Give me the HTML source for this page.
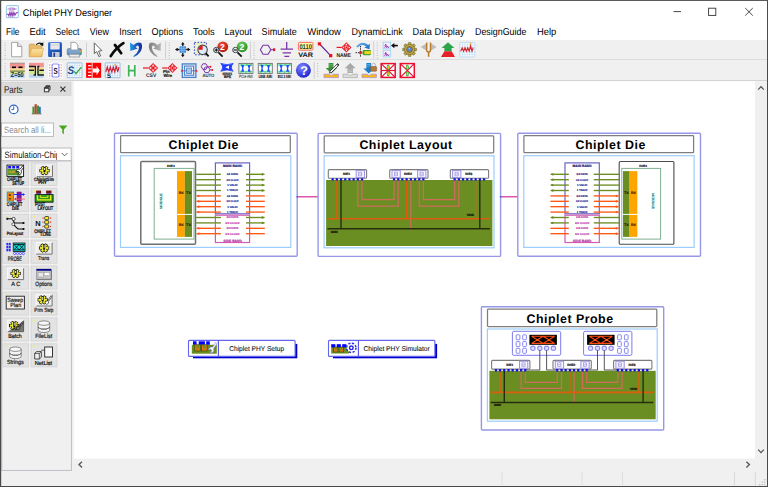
<!DOCTYPE html>
<html><head><meta charset="utf-8"><title>Chiplet PHY Designer</title>
<style>
html,body{margin:0;padding:0;background:#f0f0f0;overflow:hidden}
svg{display:block;font-family:'Liberation Sans',sans-serif;text-rendering:geometricPrecision}
</style></head><body>
<svg width="768" height="487" viewBox="0 0 768 487">
<rect x="0" y="0" width="768" height="487" fill="#f0f0f0"/>
<rect x="0" y="0" width="768" height="40" fill="#ffffff"/>
<g id="appicon">
<rect x="6.4" y="5.6" width="12" height="12" fill="#ffffff" stroke="#a6cfec" stroke-width="1.1" rx="1"/>
<path d="M7.5 9 H9.6 M10 7.5 V10.5 M11 7.5 V10.5 M12.7 7.5 V10.5 M12.9 8 L15.2 9 L12.9 10 M15.2 9 H16.6" fill="none" stroke="#a46cc8" stroke-width="0.9"/>
<path d="M6.6 14.3 H8.2 L8.9 15.9 L9.9 12.3 L10.9 15.9 L11.9 12.3 L12.9 15.9 L13.9 12.3 L14.9 15.2 L16 13.2 L17.8 12.3" fill="none" stroke="#8a3fb5" stroke-width="1.1"/>
</g>
<text x="22.8" y="15.5" font-size="9.7" fill="#000" textLength="89.4" lengthAdjust="spacingAndGlyphs">Chiplet PHY Designer</text>
<line x1="673.5" y1="11.6" x2="681" y2="11.6" stroke="#333" stroke-width="0.9" />
<rect x="708.6" y="8.2" width="7.2" height="7.2" fill="none" stroke="#333" stroke-width="0.9"/>
<path d="M745.2 8 L752.8 15.6 M752.8 8 L745.2 15.6" fill="none" stroke="#333" stroke-width="0.9"/>
<text x="6" y="35" font-size="10.0" fill="#000" textLength="13.5" lengthAdjust="spacingAndGlyphs">File</text>
<text x="29.4" y="35" font-size="10.0" fill="#000" textLength="16.2" lengthAdjust="spacingAndGlyphs">Edit</text>
<text x="55.5" y="35" font-size="10.0" fill="#000" textLength="23.9" lengthAdjust="spacingAndGlyphs">Select</text>
<text x="89.8" y="35" font-size="10.0" fill="#000" textLength="19.1" lengthAdjust="spacingAndGlyphs">View</text>
<text x="119.3" y="35" font-size="10.0" fill="#000" textLength="22.1" lengthAdjust="spacingAndGlyphs">Insert</text>
<text x="151.6" y="35" font-size="10.0" fill="#000" textLength="31.4" lengthAdjust="spacingAndGlyphs">Options</text>
<text x="193.1" y="35" font-size="10.0" fill="#000" textLength="21.6" lengthAdjust="spacingAndGlyphs">Tools</text>
<text x="224.6" y="35" font-size="10.0" fill="#000" textLength="27.1" lengthAdjust="spacingAndGlyphs">Layout</text>
<text x="261.6" y="35" font-size="10.0" fill="#000" textLength="35.2" lengthAdjust="spacingAndGlyphs">Simulate</text>
<text x="307.2" y="35" font-size="10.0" fill="#000" textLength="33.8" lengthAdjust="spacingAndGlyphs">Window</text>
<text x="351.5" y="35" font-size="10.0" fill="#000" textLength="51.2" lengthAdjust="spacingAndGlyphs">DynamicLink</text>
<text x="412.6" y="35" font-size="10.0" fill="#000" textLength="52.0" lengthAdjust="spacingAndGlyphs">Data Display</text>
<text x="475" y="35" font-size="10.0" fill="#000" textLength="51.4" lengthAdjust="spacingAndGlyphs">DesignGuide</text>
<text x="537" y="35" font-size="10.0" fill="#000" textLength="19.3" lengthAdjust="spacingAndGlyphs">Help</text>
<line x1="0" y1="59.5" x2="768" y2="59.5" stroke="#dcdcdc" stroke-width="1" />
<line x1="0" y1="80.5" x2="768" y2="80.5" stroke="#d4d4d4" stroke-width="1" />
<rect x="73.8" y="81.2" width="681.2" height="377.3" fill="#ffffff"/>
<path d="M758.2 89.6 L761 86.6 L763.8 89.6" fill="none" stroke="#555" stroke-width="1.3"/>
<path d="M758.2 449.6 L761 452.6 L763.8 449.6" fill="none" stroke="#555" stroke-width="1.3"/>
<path d="M82 461.8 L79 464.6 L82 467.4" fill="none" stroke="#555" stroke-width="1.3"/>
<path d="M746.4 461.8 L749.4 464.6 L746.4 467.4" fill="none" stroke="#555" stroke-width="1.3"/>
<line x1="502" y1="472" x2="502" y2="485.5" stroke="#dedede" stroke-width="1" />
<line x1="582" y1="472" x2="582" y2="485.5" stroke="#dedede" stroke-width="1" />
<line x1="622.5" y1="472" x2="622.5" y2="485.5" stroke="#dedede" stroke-width="1" />
<line x1="734.5" y1="472" x2="734.5" y2="485.5" stroke="#d8d8d8" stroke-width="1" />
<line x1="755.3" y1="472" x2="755.3" y2="485.5" stroke="#d8d8d8" stroke-width="1" />
<rect x="764" y="479" width="1.4" height="1.4" fill="#c4c4c4"/>
<rect x="764" y="481.5" width="1.4" height="1.4" fill="#c4c4c4"/>
<rect x="764" y="484" width="1.4" height="1.4" fill="#c4c4c4"/>
<rect x="761.5" y="481.5" width="1.4" height="1.4" fill="#c4c4c4"/>
<rect x="761.5" y="484" width="1.4" height="1.4" fill="#c4c4c4"/>
<rect x="759" y="484" width="1.4" height="1.4" fill="#c4c4c4"/>
<rect x="1.5" y="82.2" width="69.5" height="13.2" fill="#dbdbdb" stroke="#cecece" stroke-width="0.6"/>
<text x="4" y="92.6" font-size="10" fill="#1a1a1a" textLength="18.6" lengthAdjust="spacingAndGlyphs">Parts</text>
<rect x="44.4" y="87.8" width="4.4" height="4" fill="#f4f4f4" stroke="#3a3a3a" stroke-width="1"/>
<path d="M45.8 87.6 v-1.6 h4.2 v4 h-1.2" fill="none" stroke="#3a3a3a" stroke-width="1"/>
<line x1="44.4" y1="88" x2="48.8" y2="88" stroke="#2a2a2a" stroke-width="1.3" />
<line x1="45.8" y1="86.1" x2="50" y2="86.1" stroke="#2a2a2a" stroke-width="1.2" />
<path d="M60.4 86.6 L65.4 91.6 M65.4 86.6 L60.4 91.6" fill="none" stroke="#333" stroke-width="1.1"/>
<circle cx="13.7" cy="109.4" r="4.3" fill="#fff" stroke="#2b65c8" stroke-width="1.2"/>
<path d="M13.7 106.4 V109.6 H11.4" fill="none" stroke="#2b65c8" stroke-width="1"/>
<rect x="32.4" y="106.6" width="2.2" height="6.8" fill="#3a9a3a"/>
<rect x="34.6" y="104.2" width="2.2" height="9.2" fill="#d23a2a"/>
<rect x="36.8" y="105.6" width="2.2" height="7.8" fill="#2a9a4a"/>
<rect x="39" y="106.8" width="1.8" height="6.6" fill="#3a6ad0"/>
<line x1="31.8" y1="113.8" x2="41.4" y2="113.8" stroke="#6a4a2a" stroke-width="0.9" />
<rect x="1.5" y="123" width="52" height="13.4" fill="#ffffff" stroke="#b4b4b4" stroke-width="0.9"/>
<text x="4" y="133" font-size="9.2" fill="#8a8a8a" textLength="47" lengthAdjust="spacingAndGlyphs">Search all li...</text>
<path d="M58.8 125.6 H67.4 L63.9 129.6 V134.2 L62.3 133 V129.6 Z" fill="#4aa51e"/>
<rect x="1.5" y="148" width="69.7" height="12.8" fill="#ffffff" stroke="#b4b4b4" stroke-width="0.9"/>
<clipPath id="ddclip"><rect x="2" y="148" width="55" height="13"/></clipPath>
<text x="4.6" y="157.8" font-size="9.2" fill="#111" textLength="64" lengthAdjust="spacingAndGlyphs" clip-path="url(#ddclip)">Simulation-Chiplet</text>
<path d="M61.8 153 L64.6 155.8 L67.4 153" fill="none" stroke="#555" stroke-width="0.9"/>
<rect x="1.8" y="161" width="69.6" height="309.4" fill="#f0f0f0" stroke="#b9b9c4" stroke-width="0.9"/>
<rect x="0" y="0" width="768" height="1" fill="#5a5a5a"/>
<rect x="0" y="0" width="1.2" height="487" fill="#4a4a4a"/>
<rect x="767" y="0" width="1" height="487" fill="#4a4a4a"/>
<rect x="0" y="486" width="768" height="1" fill="#4a4a4a"/>
<rect x="114.5" y="133.3" width="182.7" height="123.0" fill="#ffffff" stroke="#9797e8" stroke-width="1.4" rx="1"/>
<rect x="120.6" y="135.7" width="169.7" height="17" fill="#ffffff" stroke="#7e7e7e" stroke-width="1.25" rx="0.8"/>
<text x="168.5" y="148.9" font-size="12.4" font-weight="bold" fill="#000" textLength="69.9" lengthAdjust="spacing">Chiplet Die</text>
<rect x="120.5" y="155.70000000000002" width="170.3" height="91.7" fill="none" stroke="#9ccdfc" stroke-width="1.2"/>
<rect x="140.8" y="161.5" width="54.7" height="82.8" fill="#fff" stroke="#707070" stroke-width="1.5" rx="1"/>
<rect x="154.2" y="168.4" width="39.8" height="70.7" fill="#fff" stroke="#7fb08f" stroke-width="1"/>
<rect x="177.0" y="171.10000000000002" width="7.8" height="65.8" fill="#ffa500"/>
<rect x="184.8" y="171.10000000000002" width="7.2" height="65.8" fill="#6b8e23"/>
<line x1="177.0" y1="214.4" x2="193.0" y2="214.4" stroke="#ffffff" stroke-width="1" />
<text x="167.0" y="166.70000000000002" font-size="3" fill="#222" textLength="8" lengthAdjust="spacingAndGlyphs" stroke="#222" stroke-width="0.22">DIE1</text>
<text x="178.8" y="193.9" font-size="3.3" fill="#2a1c00" textLength="4.8" lengthAdjust="spacingAndGlyphs" stroke="#2a1c00" stroke-width="0.22">RX</text>
<text x="186.1" y="193.9" font-size="3.3" fill="#0c1a06" textLength="4.8" lengthAdjust="spacingAndGlyphs" stroke="#0c1a06" stroke-width="0.22">TX</text>
<text x="178.8" y="225.70000000000002" font-size="3.3" fill="#2a1c00" textLength="4.8" lengthAdjust="spacingAndGlyphs" stroke="#2a1c00" stroke-width="0.22">RX</text>
<text x="186.1" y="225.70000000000002" font-size="3.3" fill="#0c1a06" textLength="4.8" lengthAdjust="spacingAndGlyphs" stroke="#0c1a06" stroke-width="0.22">TX</text>
<text x="0" y="0" font-size="3.2" fill="#2e8b7a" textLength="15.6" lengthAdjust="spacingAndGlyphs" stroke="#2e8b7a" stroke-width="0.22" transform="translate(161.7 208.8) rotate(-90)">MODULE</text>
<rect x="215.4" y="162.9" width="34.2" height="50.9" fill="#ffffff" stroke="#6a64c6" stroke-width="1.2"/>
<rect x="215.4" y="215.20000000000002" width="34.2" height="27.3" fill="#ffffff" stroke="#d25cb2" stroke-width="1.2"/>
<text x="222.9" y="167.20000000000002" font-size="3.4" fill="#28287a" textLength="19.2" lengthAdjust="spacingAndGlyphs" font-weight="bold" stroke="#28287a" stroke-width="0.22">MAIN BAND</text>
<text x="227.0" y="175.2" font-size="2.7" fill="#34349a" textLength="11" lengthAdjust="spacingAndGlyphs" stroke="#34349a" stroke-width="0.22">64 DATA</text>
<text x="226.5" y="180.6" font-size="2.7" fill="#34349a" textLength="12" lengthAdjust="spacingAndGlyphs" stroke="#34349a" stroke-width="0.22">2/2 CLOCK</text>
<text x="227.2" y="186.0" font-size="2.7" fill="#34349a" textLength="10.5" lengthAdjust="spacingAndGlyphs" stroke="#34349a" stroke-width="0.22">1 VALID</text>
<text x="227.1" y="191.4" font-size="2.7" fill="#34349a" textLength="10.8" lengthAdjust="spacingAndGlyphs" stroke="#34349a" stroke-width="0.22">1 TRACK</text>
<text x="227.0" y="196.8" font-size="2.7" fill="#34349a" textLength="11" lengthAdjust="spacingAndGlyphs" stroke="#34349a" stroke-width="0.22">64 DATA</text>
<text x="226.5" y="202.2" font-size="2.7" fill="#34349a" textLength="12" lengthAdjust="spacingAndGlyphs" stroke="#34349a" stroke-width="0.22">2/2 CLOCK</text>
<text x="227.2" y="207.6" font-size="2.7" fill="#34349a" textLength="10.5" lengthAdjust="spacingAndGlyphs" stroke="#34349a" stroke-width="0.22">1 VALID</text>
<text x="227.1" y="213.0" font-size="2.7" fill="#34349a" textLength="10.8" lengthAdjust="spacingAndGlyphs" stroke="#34349a" stroke-width="0.22">1 TRACK</text>
<text x="226.5" y="218.4" font-size="2.7" fill="#c846a8" textLength="12" lengthAdjust="spacingAndGlyphs" stroke="#c846a8" stroke-width="0.22">2/4 DATA</text>
<text x="225.3" y="223.8" font-size="2.7" fill="#c846a8" textLength="14.3" lengthAdjust="spacingAndGlyphs" stroke="#c846a8" stroke-width="0.22">2/2 CLOCK</text>
<text x="226.5" y="229.2" font-size="2.7" fill="#c846a8" textLength="12" lengthAdjust="spacingAndGlyphs" stroke="#c846a8" stroke-width="0.22">2/4 DATA</text>
<text x="225.3" y="234.6" font-size="2.7" fill="#c846a8" textLength="14.3" lengthAdjust="spacingAndGlyphs" stroke="#c846a8" stroke-width="0.22">2/2 CLOCK</text>
<text x="223.5" y="241.60000000000002" font-size="3.4" fill="#b838a4" textLength="18.3" lengthAdjust="spacingAndGlyphs" font-weight="bold" stroke="#b838a4" stroke-width="0.22">SIDE BAND</text>
<line x1="196.1" y1="174.3" x2="220.9" y2="174.3" stroke="#6b8e23" stroke-width="1.35" />
<line x1="246.0" y1="174.3" x2="264.40000000000003" y2="174.3" stroke="#6b8e23" stroke-width="1.35" />
<path d="M265.00000000000006 174.3 L261.8 172.9 L261.8 175.70000000000002 Z" fill="#6b8e23"/>
<line x1="196.1" y1="179.7" x2="220.9" y2="179.7" stroke="#6b8e23" stroke-width="1.35" />
<line x1="246.0" y1="179.7" x2="264.40000000000003" y2="179.7" stroke="#6b8e23" stroke-width="1.35" />
<path d="M265.00000000000006 179.7 L261.8 178.29999999999998 L261.8 181.1 Z" fill="#6b8e23"/>
<line x1="196.1" y1="185.1" x2="220.9" y2="185.1" stroke="#6b8e23" stroke-width="1.35" />
<line x1="246.0" y1="185.1" x2="264.40000000000003" y2="185.1" stroke="#6b8e23" stroke-width="1.35" />
<path d="M265.00000000000006 185.1 L261.8 183.7 L261.8 186.5 Z" fill="#6b8e23"/>
<line x1="196.1" y1="190.5" x2="220.9" y2="190.5" stroke="#6b8e23" stroke-width="1.35" />
<line x1="246.0" y1="190.5" x2="264.40000000000003" y2="190.5" stroke="#6b8e23" stroke-width="1.35" />
<path d="M265.00000000000006 190.5 L261.8 189.1 L261.8 191.9 Z" fill="#6b8e23"/>
<line x1="196.7" y1="195.9" x2="220.9" y2="195.9" stroke="#ff5a14" stroke-width="1.35" />
<path d="M196.1 195.9 L199.29999999999998 194.5 L199.29999999999998 197.3 Z" fill="#ff5a14"/>
<line x1="246.0" y1="195.9" x2="264.8" y2="195.9" stroke="#ff5a14" stroke-width="1.35" />
<line x1="196.7" y1="201.3" x2="220.9" y2="201.3" stroke="#ff5a14" stroke-width="1.35" />
<path d="M196.1 201.3 L199.29999999999998 199.9 L199.29999999999998 202.70000000000002 Z" fill="#ff5a14"/>
<line x1="246.0" y1="201.3" x2="264.8" y2="201.3" stroke="#ff5a14" stroke-width="1.35" />
<line x1="196.7" y1="206.7" x2="220.9" y2="206.7" stroke="#ff5a14" stroke-width="1.35" />
<path d="M196.1 206.7 L199.29999999999998 205.29999999999998 L199.29999999999998 208.1 Z" fill="#ff5a14"/>
<line x1="246.0" y1="206.7" x2="264.8" y2="206.7" stroke="#ff5a14" stroke-width="1.35" />
<line x1="196.7" y1="212.1" x2="220.9" y2="212.1" stroke="#ff5a14" stroke-width="1.35" />
<path d="M196.1 212.1 L199.29999999999998 210.7 L199.29999999999998 213.5 Z" fill="#ff5a14"/>
<line x1="246.0" y1="212.1" x2="264.8" y2="212.1" stroke="#ff5a14" stroke-width="1.35" />
<line x1="196.1" y1="217.5" x2="220.9" y2="217.5" stroke="#6b8e23" stroke-width="1.35" />
<line x1="246.0" y1="217.5" x2="264.40000000000003" y2="217.5" stroke="#6b8e23" stroke-width="1.35" />
<path d="M265.00000000000006 217.5 L261.8 216.1 L261.8 218.9 Z" fill="#6b8e23"/>
<line x1="196.1" y1="222.9" x2="220.9" y2="222.9" stroke="#6b8e23" stroke-width="1.35" />
<line x1="246.0" y1="222.9" x2="264.40000000000003" y2="222.9" stroke="#6b8e23" stroke-width="1.35" />
<path d="M265.00000000000006 222.9 L261.8 221.5 L261.8 224.3 Z" fill="#6b8e23"/>
<line x1="196.7" y1="228.3" x2="220.9" y2="228.3" stroke="#ff5a14" stroke-width="1.35" />
<path d="M196.1 228.3 L199.29999999999998 226.9 L199.29999999999998 229.70000000000002 Z" fill="#ff5a14"/>
<line x1="246.0" y1="228.3" x2="264.8" y2="228.3" stroke="#ff5a14" stroke-width="1.35" />
<line x1="196.7" y1="233.7" x2="220.9" y2="233.7" stroke="#ff5a14" stroke-width="1.35" />
<path d="M196.1 233.7 L199.29999999999998 232.29999999999998 L199.29999999999998 235.1 Z" fill="#ff5a14"/>
<line x1="246.0" y1="233.7" x2="264.8" y2="233.7" stroke="#ff5a14" stroke-width="1.35" />
<rect x="318.1" y="133.4" width="182.5" height="123.0" fill="#ffffff" stroke="#9797e8" stroke-width="1.4" rx="1"/>
<rect x="324.20000000000005" y="135.8" width="169.5" height="17" fill="#ffffff" stroke="#7e7e7e" stroke-width="1.25" rx="0.8"/>
<text x="359.4" y="148.9" font-size="12.4" font-weight="bold" fill="#000" textLength="92.8" lengthAdjust="spacing">Chiplet Layout</text>
<rect x="324.1" y="155.8" width="169.9" height="92" fill="none" stroke="#9ccdfc" stroke-width="1.2"/>
<rect x="326.1" y="180.0" width="166.3" height="66" fill="#6b8e23"/>
<path d="M362.0 180.0 V199.7 H394.0 V180.0" fill="none" stroke="#cf6c5c" stroke-width="1.2"/>
<path d="M357.8 180.0 V206.2 H398.2 V180.0" fill="none" stroke="#cf6c5c" stroke-width="1.2"/>
<path d="M423.4 180.0 V199.7 H454.6 V180.0" fill="none" stroke="#cf6c5c" stroke-width="1.2"/>
<path d="M419.2 180.0 V206.2 H458.8 V180.0" fill="none" stroke="#cf6c5c" stroke-width="1.2"/>
<line x1="410.8" y1="180.0" x2="410.8" y2="229.4" stroke="#cf6c5c" stroke-width="1.2" />
<line x1="327.40000000000003" y1="218.8" x2="490.0" y2="218.8" stroke="#dc5d0e" stroke-width="1.6" />
<line x1="336.8" y1="180.0" x2="336.8" y2="218.8" stroke="#dc5d0e" stroke-width="1.3" />
<line x1="406.6" y1="180.0" x2="406.6" y2="218.8" stroke="#dc5d0e" stroke-width="1.3" />
<line x1="475.6" y1="180.0" x2="475.6" y2="218.8" stroke="#dc5d0e" stroke-width="1.3" />
<line x1="327.40000000000003" y1="228.8" x2="490.0" y2="228.8" stroke="#272e10" stroke-width="1.6" />
<line x1="341.0" y1="180.0" x2="341.0" y2="228.8" stroke="#272e10" stroke-width="1.4" />
<line x1="479.8" y1="180.0" x2="479.8" y2="228.8" stroke="#272e10" stroke-width="1.4" />
<text x="330.8" y="232.7" font-size="3" fill="#0c0c06" textLength="7" lengthAdjust="spacingAndGlyphs" font-weight="bold" stroke="#0c0c06" stroke-width="0.22">GND</text>
<text x="466.8" y="216.2" font-size="3" fill="#0c0c06" textLength="7" lengthAdjust="spacingAndGlyphs" font-weight="bold" stroke="#0c0c06" stroke-width="0.22">VDD</text>
<rect x="328.3" y="169.60000000000002" width="38.3" height="8.7" fill="#ffffff" stroke="#7c7c7c" stroke-width="1.1" rx="1"/>
<rect x="356.2" y="170.40000000000003" width="8.3" height="7.1" fill="#f6f4ff" stroke="#9a92e2" stroke-width="1"/>
<rect x="358.59999999999997" y="172.10000000000002" width="3.2" height="3.8" fill="none" stroke="#8c84dc" stroke-width="0.6"/>
<line x1="358.59999999999997" y1="174.00000000000003" x2="361.8" y2="174.00000000000003" stroke="#8c84dc" stroke-width="0.6" />
<text x="342.9" y="175.3" font-size="3.2" fill="#222" textLength="7" lengthAdjust="spacingAndGlyphs" font-weight="bold" stroke="#222" stroke-width="0.22">DIE1</text>
<rect x="331.5" y="178.3" width="2.3" height="2.3" fill="#1212e0" rx="0.5"/>
<rect x="335.7" y="178.3" width="2.3" height="2.3" fill="#1212e0" rx="0.5"/>
<rect x="339.9" y="178.3" width="2.3" height="2.3" fill="#1212e0" rx="0.5"/>
<rect x="344.1" y="178.3" width="2.3" height="2.3" fill="#1212e0" rx="0.5"/>
<rect x="348.3" y="178.3" width="2.3" height="2.3" fill="#1212e0" rx="0.5"/>
<rect x="352.5" y="178.3" width="2.3" height="2.3" fill="#1212e0" rx="0.5"/>
<rect x="356.7" y="178.3" width="2.3" height="2.3" fill="#1212e0" rx="0.5"/>
<rect x="360.9" y="178.3" width="2.3" height="2.3" fill="#1212e0" rx="0.5"/>
<rect x="389.7" y="169.60000000000002" width="38.3" height="8.7" fill="#ffffff" stroke="#7c7c7c" stroke-width="1.1" rx="1"/>
<rect x="392.0" y="170.40000000000003" width="8.3" height="7.1" fill="#f6f4ff" stroke="#9a92e2" stroke-width="1"/>
<rect x="394.4" y="172.10000000000002" width="3.2" height="3.8" fill="none" stroke="#8c84dc" stroke-width="0.6"/>
<line x1="394.4" y1="174.00000000000003" x2="397.6" y2="174.00000000000003" stroke="#8c84dc" stroke-width="0.6" />
<rect x="417.59999999999997" y="170.40000000000003" width="8.3" height="7.1" fill="#f6f4ff" stroke="#9a92e2" stroke-width="1"/>
<rect x="419.99999999999994" y="172.10000000000002" width="3.2" height="3.8" fill="none" stroke="#8c84dc" stroke-width="0.6"/>
<line x1="419.99999999999994" y1="174.00000000000003" x2="423.2" y2="174.00000000000003" stroke="#8c84dc" stroke-width="0.6" />
<text x="404.0" y="175.3" font-size="3.2" fill="#222" textLength="8" lengthAdjust="spacingAndGlyphs" font-weight="bold" stroke="#222" stroke-width="0.22">DIE2</text>
<rect x="392.9" y="178.3" width="2.3" height="2.3" fill="#1212e0" rx="0.5"/>
<rect x="397.1" y="178.3" width="2.3" height="2.3" fill="#1212e0" rx="0.5"/>
<rect x="401.2" y="178.3" width="2.3" height="2.3" fill="#1212e0" rx="0.5"/>
<rect x="405.5" y="178.3" width="2.3" height="2.3" fill="#1212e0" rx="0.5"/>
<rect x="409.7" y="178.3" width="2.3" height="2.3" fill="#1212e0" rx="0.5"/>
<rect x="413.9" y="178.3" width="2.3" height="2.3" fill="#1212e0" rx="0.5"/>
<rect x="418.1" y="178.3" width="2.3" height="2.3" fill="#1212e0" rx="0.5"/>
<rect x="422.2" y="178.3" width="2.3" height="2.3" fill="#1212e0" rx="0.5"/>
<rect x="450.3" y="169.60000000000002" width="38.3" height="8.7" fill="#ffffff" stroke="#7c7c7c" stroke-width="1.1" rx="1"/>
<rect x="452.6" y="170.40000000000003" width="8.3" height="7.1" fill="#f6f4ff" stroke="#9a92e2" stroke-width="1"/>
<rect x="455.0" y="172.10000000000002" width="3.2" height="3.8" fill="none" stroke="#8c84dc" stroke-width="0.6"/>
<line x1="455.0" y1="174.00000000000003" x2="458.20000000000005" y2="174.00000000000003" stroke="#8c84dc" stroke-width="0.6" />
<text x="465.3" y="175.3" font-size="3.2" fill="#222" textLength="7" lengthAdjust="spacingAndGlyphs" font-weight="bold" stroke="#222" stroke-width="0.22">DIE3</text>
<rect x="453.5" y="178.3" width="2.3" height="2.3" fill="#1212e0" rx="0.5"/>
<rect x="457.7" y="178.3" width="2.3" height="2.3" fill="#1212e0" rx="0.5"/>
<rect x="461.9" y="178.3" width="2.3" height="2.3" fill="#1212e0" rx="0.5"/>
<rect x="466.1" y="178.3" width="2.3" height="2.3" fill="#1212e0" rx="0.5"/>
<rect x="470.3" y="178.3" width="2.3" height="2.3" fill="#1212e0" rx="0.5"/>
<rect x="474.5" y="178.3" width="2.3" height="2.3" fill="#1212e0" rx="0.5"/>
<rect x="478.7" y="178.3" width="2.3" height="2.3" fill="#1212e0" rx="0.5"/>
<rect x="482.9" y="178.3" width="2.3" height="2.3" fill="#1212e0" rx="0.5"/>
<rect x="517.8" y="133.3" width="182.7" height="123.0" fill="#ffffff" stroke="#9797e8" stroke-width="1.4" rx="1"/>
<rect x="523.9" y="135.7" width="169.7" height="17" fill="#ffffff" stroke="#7e7e7e" stroke-width="1.25" rx="0.8"/>
<text x="575.5" y="148.9" font-size="12.4" font-weight="bold" fill="#000" textLength="69.8" lengthAdjust="spacing">Chiplet Die</text>
<rect x="523.8" y="155.70000000000002" width="170.3" height="91.7" fill="none" stroke="#9ccdfc" stroke-width="1.2"/>
<rect x="619.1999999999999" y="161.5" width="54.7" height="82.8" fill="#fff" stroke="#4c4c4c" stroke-width="1.1" rx="1"/>
<rect x="621.8" y="168.4" width="38.8" height="70.7" fill="#fff" stroke="#7fb08f" stroke-width="1"/>
<rect x="623.0" y="171.10000000000002" width="6.6" height="65.8" fill="#6b8e23"/>
<rect x="629.5999999999999" y="171.10000000000002" width="7.7" height="65.8" fill="#ffa500"/>
<line x1="622.3" y1="214.4" x2="638.3" y2="214.4" stroke="#ffffff" stroke-width="1" />
<text x="639.3" y="166.70000000000002" font-size="3" fill="#222" textLength="8" lengthAdjust="spacingAndGlyphs" stroke="#222" stroke-width="0.22">DIE1</text>
<text x="624.0" y="193.9" font-size="3.3" fill="#0c1a06" textLength="4.8" lengthAdjust="spacingAndGlyphs" stroke="#0c1a06" stroke-width="0.22">TX</text>
<text x="631.0" y="193.9" font-size="3.3" fill="#2a1c00" textLength="4.8" lengthAdjust="spacingAndGlyphs" stroke="#2a1c00" stroke-width="0.22">RX</text>
<text x="624.0" y="225.70000000000002" font-size="3.3" fill="#0c1a06" textLength="4.8" lengthAdjust="spacingAndGlyphs" stroke="#0c1a06" stroke-width="0.22">TX</text>
<text x="631.0" y="225.70000000000002" font-size="3.3" fill="#2a1c00" textLength="4.8" lengthAdjust="spacingAndGlyphs" stroke="#2a1c00" stroke-width="0.22">RX</text>
<text x="0" y="0" font-size="3.2" fill="#2e8b7a" textLength="15.6" lengthAdjust="spacingAndGlyphs" stroke="#2e8b7a" stroke-width="0.22" transform="translate(651.8 193.3) rotate(90)">MODULE</text>
<rect x="565.0" y="162.9" width="34.3" height="50.9" fill="#ffffff" stroke="#6a64c6" stroke-width="1.2"/>
<rect x="565.0" y="215.20000000000002" width="34.3" height="27.3" fill="#ffffff" stroke="#d25cb2" stroke-width="1.2"/>
<text x="572.5" y="167.20000000000002" font-size="3.4" fill="#28287a" textLength="19.2" lengthAdjust="spacingAndGlyphs" font-weight="bold" stroke="#28287a" stroke-width="0.22">MAIN BAND</text>
<text x="576.6" y="175.2" font-size="2.7" fill="#34349a" textLength="11" lengthAdjust="spacingAndGlyphs" stroke="#34349a" stroke-width="0.22">64 DATA</text>
<text x="576.1" y="180.6" font-size="2.7" fill="#34349a" textLength="12" lengthAdjust="spacingAndGlyphs" stroke="#34349a" stroke-width="0.22">2/2 CLOCK</text>
<text x="576.9" y="186.0" font-size="2.7" fill="#34349a" textLength="10.5" lengthAdjust="spacingAndGlyphs" stroke="#34349a" stroke-width="0.22">1 VALID</text>
<text x="576.8" y="191.4" font-size="2.7" fill="#34349a" textLength="10.8" lengthAdjust="spacingAndGlyphs" stroke="#34349a" stroke-width="0.22">1 TRACK</text>
<text x="576.6" y="196.8" font-size="2.7" fill="#34349a" textLength="11" lengthAdjust="spacingAndGlyphs" stroke="#34349a" stroke-width="0.22">64 DATA</text>
<text x="576.1" y="202.2" font-size="2.7" fill="#34349a" textLength="12" lengthAdjust="spacingAndGlyphs" stroke="#34349a" stroke-width="0.22">2/2 CLOCK</text>
<text x="576.9" y="207.6" font-size="2.7" fill="#34349a" textLength="10.5" lengthAdjust="spacingAndGlyphs" stroke="#34349a" stroke-width="0.22">1 VALID</text>
<text x="576.8" y="213.0" font-size="2.7" fill="#34349a" textLength="10.8" lengthAdjust="spacingAndGlyphs" stroke="#34349a" stroke-width="0.22">1 TRACK</text>
<text x="576.1" y="218.4" font-size="2.7" fill="#c846a8" textLength="12" lengthAdjust="spacingAndGlyphs" stroke="#c846a8" stroke-width="0.22">2/4 DATA</text>
<text x="575.0" y="223.8" font-size="2.7" fill="#c846a8" textLength="14.3" lengthAdjust="spacingAndGlyphs" stroke="#c846a8" stroke-width="0.22">2/2 CLOCK</text>
<text x="576.1" y="229.2" font-size="2.7" fill="#c846a8" textLength="12" lengthAdjust="spacingAndGlyphs" stroke="#c846a8" stroke-width="0.22">2/4 DATA</text>
<text x="575.0" y="234.6" font-size="2.7" fill="#c846a8" textLength="14.3" lengthAdjust="spacingAndGlyphs" stroke="#c846a8" stroke-width="0.22">2/2 CLOCK</text>
<text x="573.1" y="241.60000000000002" font-size="3.4" fill="#b838a4" textLength="18.3" lengthAdjust="spacingAndGlyphs" font-weight="bold" stroke="#b838a4" stroke-width="0.22">SIDE BAND</text>
<line x1="550.8" y1="174.3" x2="568.8" y2="174.3" stroke="#6b8e23" stroke-width="1.35" />
<path d="M550.1999999999999 174.3 L553.4 172.9 L553.4 175.70000000000002 Z" fill="#6b8e23"/>
<line x1="593.8" y1="174.3" x2="619.0" y2="174.3" stroke="#6b8e23" stroke-width="1.35" />
<line x1="550.8" y1="179.7" x2="568.8" y2="179.7" stroke="#6b8e23" stroke-width="1.35" />
<path d="M550.1999999999999 179.7 L553.4 178.29999999999998 L553.4 181.1 Z" fill="#6b8e23"/>
<line x1="593.8" y1="179.7" x2="619.0" y2="179.7" stroke="#6b8e23" stroke-width="1.35" />
<line x1="550.8" y1="185.1" x2="568.8" y2="185.1" stroke="#6b8e23" stroke-width="1.35" />
<path d="M550.1999999999999 185.1 L553.4 183.7 L553.4 186.5 Z" fill="#6b8e23"/>
<line x1="593.8" y1="185.1" x2="619.0" y2="185.1" stroke="#6b8e23" stroke-width="1.35" />
<line x1="550.8" y1="190.5" x2="568.8" y2="190.5" stroke="#6b8e23" stroke-width="1.35" />
<path d="M550.1999999999999 190.5 L553.4 189.1 L553.4 191.9 Z" fill="#6b8e23"/>
<line x1="593.8" y1="190.5" x2="619.0" y2="190.5" stroke="#6b8e23" stroke-width="1.35" />
<line x1="550.4" y1="195.9" x2="568.8" y2="195.9" stroke="#ff5a14" stroke-width="1.35" />
<line x1="593.8" y1="195.9" x2="618.4" y2="195.9" stroke="#ff5a14" stroke-width="1.35" />
<path d="M619.0 195.9 L615.8 194.5 L615.8 197.3 Z" fill="#ff5a14"/>
<line x1="550.4" y1="201.3" x2="568.8" y2="201.3" stroke="#ff5a14" stroke-width="1.35" />
<line x1="593.8" y1="201.3" x2="618.4" y2="201.3" stroke="#ff5a14" stroke-width="1.35" />
<path d="M619.0 201.3 L615.8 199.9 L615.8 202.70000000000002 Z" fill="#ff5a14"/>
<line x1="550.4" y1="206.7" x2="568.8" y2="206.7" stroke="#ff5a14" stroke-width="1.35" />
<line x1="593.8" y1="206.7" x2="618.4" y2="206.7" stroke="#ff5a14" stroke-width="1.35" />
<path d="M619.0 206.7 L615.8 205.29999999999998 L615.8 208.1 Z" fill="#ff5a14"/>
<line x1="550.4" y1="212.1" x2="568.8" y2="212.1" stroke="#ff5a14" stroke-width="1.35" />
<line x1="593.8" y1="212.1" x2="618.4" y2="212.1" stroke="#ff5a14" stroke-width="1.35" />
<path d="M619.0 212.1 L615.8 210.7 L615.8 213.5 Z" fill="#ff5a14"/>
<line x1="550.8" y1="217.5" x2="568.8" y2="217.5" stroke="#6b8e23" stroke-width="1.35" />
<path d="M550.1999999999999 217.5 L553.4 216.1 L553.4 218.9 Z" fill="#6b8e23"/>
<line x1="593.8" y1="217.5" x2="619.0" y2="217.5" stroke="#6b8e23" stroke-width="1.35" />
<line x1="550.8" y1="222.9" x2="568.8" y2="222.9" stroke="#6b8e23" stroke-width="1.35" />
<path d="M550.1999999999999 222.9 L553.4 221.5 L553.4 224.3 Z" fill="#6b8e23"/>
<line x1="593.8" y1="222.9" x2="619.0" y2="222.9" stroke="#6b8e23" stroke-width="1.35" />
<line x1="550.4" y1="228.3" x2="568.8" y2="228.3" stroke="#ff5a14" stroke-width="1.35" />
<line x1="593.8" y1="228.3" x2="618.4" y2="228.3" stroke="#ff5a14" stroke-width="1.35" />
<path d="M619.0 228.3 L615.8 226.9 L615.8 229.70000000000002 Z" fill="#ff5a14"/>
<line x1="550.4" y1="233.7" x2="568.8" y2="233.7" stroke="#ff5a14" stroke-width="1.35" />
<line x1="593.8" y1="233.7" x2="618.4" y2="233.7" stroke="#ff5a14" stroke-width="1.35" />
<path d="M619.0 233.7 L615.8 232.29999999999998 L615.8 235.1 Z" fill="#ff5a14"/>
<rect x="481.4" y="306.8" width="182.3" height="123.2" fill="#ffffff" stroke="#9797e8" stroke-width="1.4" rx="1"/>
<rect x="487.5" y="309.2" width="169.3" height="17.4" fill="#ffffff" stroke="#7e7e7e" stroke-width="1.25" rx="0.8"/>
<text x="526.5" y="322.9" font-size="12.4" font-weight="bold" fill="#000" textLength="86.6" lengthAdjust="spacing">Chiplet Probe</text>
<rect x="487.4" y="329.0" width="169.8" height="92.2" fill="none" stroke="#9ccdfc" stroke-width="1.2"/>
<rect x="489.4" y="370.8" width="166.3" height="48.5" fill="#6b8e23"/>
<path d="M525.3 370.8 V382.4 H557.3 V370.8" fill="none" stroke="#cf6c5c" stroke-width="1.2"/>
<path d="M521.1 370.8 V388.4 H561.5 V370.8" fill="none" stroke="#cf6c5c" stroke-width="1.2"/>
<path d="M586.7 370.8 V382.4 H617.9 V370.8" fill="none" stroke="#cf6c5c" stroke-width="1.2"/>
<path d="M582.5 370.8 V388.4 H622.1 V370.8" fill="none" stroke="#cf6c5c" stroke-width="1.2"/>
<line x1="574.1" y1="370.8" x2="574.1" y2="403.1" stroke="#cf6c5c" stroke-width="1.2" />
<line x1="490.7" y1="392.4" x2="653.3" y2="392.4" stroke="#dc5d0e" stroke-width="1.6" />
<line x1="500.1" y1="370.8" x2="500.1" y2="392.4" stroke="#dc5d0e" stroke-width="1.3" />
<line x1="569.9" y1="370.8" x2="569.9" y2="392.4" stroke="#dc5d0e" stroke-width="1.3" />
<line x1="638.9" y1="370.8" x2="638.9" y2="392.4" stroke="#dc5d0e" stroke-width="1.3" />
<line x1="490.7" y1="402.5" x2="653.3" y2="402.5" stroke="#272e10" stroke-width="1.6" />
<line x1="504.3" y1="370.8" x2="504.3" y2="402.5" stroke="#272e10" stroke-width="1.4" />
<line x1="643.1" y1="370.8" x2="643.1" y2="402.5" stroke="#272e10" stroke-width="1.4" />
<text x="494.1" y="406.4" font-size="3" fill="#0c0c06" textLength="7" lengthAdjust="spacingAndGlyphs" font-weight="bold" stroke="#0c0c06" stroke-width="0.22">GND</text>
<text x="630.1" y="389.8" font-size="3" fill="#0c0c06" textLength="7" lengthAdjust="spacingAndGlyphs" font-weight="bold" stroke="#0c0c06" stroke-width="0.22">VDD</text>
<rect x="512.4" y="331.3" width="48.3" height="24" fill="#ffffff" stroke="#7b7bf0" stroke-width="1" rx="1.5"/>
<rect x="529.4" y="334.8" width="27.5" height="10" fill="#000000"/>
<path d="M531.6 336.2 H554.6999999999999 M531.6 343.40000000000003 H554.6999999999999 M531.6 336.2 L543.15 343.40000000000003 L554.6999999999999 336.2 M531.6 343.40000000000003 L543.15 336.2 L554.6999999999999 343.40000000000003" fill="none" stroke="#ff4a10" stroke-width="1.1"/>
<circle cx="532.9" cy="348.3" r="2.2" fill="#dedeff" stroke="#8c8cf2" stroke-width="1.1"/>
<circle cx="539.8" cy="348.3" r="2.2" fill="#dedeff" stroke="#8c8cf2" stroke-width="1.1"/>
<circle cx="546.6" cy="348.3" r="2.2" fill="#dedeff" stroke="#8c8cf2" stroke-width="1.1"/>
<circle cx="553.4" cy="348.3" r="2.2" fill="#dedeff" stroke="#8c8cf2" stroke-width="1.1"/>
<rect x="516.2" y="334.8" width="3.7" height="5" fill="#ffffff" stroke="#7b7bf0" stroke-width="0.9" rx="0.8"/>
<rect x="516.2" y="341.6" width="3.7" height="5" fill="#ffffff" stroke="#7b7bf0" stroke-width="0.9" rx="0.8"/>
<rect x="516.2" y="348.3" width="3.7" height="5" fill="#ffffff" stroke="#7b7bf0" stroke-width="0.9" rx="0.8"/>
<rect x="522.7" y="334.8" width="3.7" height="5" fill="#ffffff" stroke="#7b7bf0" stroke-width="0.9" rx="0.8"/>
<rect x="522.7" y="341.6" width="3.7" height="5" fill="#ffffff" stroke="#7b7bf0" stroke-width="0.9" rx="0.8"/>
<rect x="522.7" y="348.3" width="3.7" height="5" fill="#ffffff" stroke="#7b7bf0" stroke-width="0.9" rx="0.8"/>
<rect x="583.6" y="331.3" width="48.3" height="24" fill="#ffffff" stroke="#7b7bf0" stroke-width="1" rx="1.5"/>
<rect x="587.1" y="334.8" width="27.5" height="10" fill="#000000"/>
<path d="M589.3000000000001 336.2 H612.4 M589.3000000000001 343.40000000000003 H612.4 M589.3000000000001 336.2 L600.85 343.40000000000003 L612.4 336.2 M589.3000000000001 343.40000000000003 L600.85 336.2 L612.4 343.40000000000003" fill="none" stroke="#ff4a10" stroke-width="1.1"/>
<circle cx="590.6" cy="348.3" r="2.2" fill="#dedeff" stroke="#8c8cf2" stroke-width="1.1"/>
<circle cx="597.5" cy="348.3" r="2.2" fill="#dedeff" stroke="#8c8cf2" stroke-width="1.1"/>
<circle cx="604.3" cy="348.3" r="2.2" fill="#dedeff" stroke="#8c8cf2" stroke-width="1.1"/>
<circle cx="611.1" cy="348.3" r="2.2" fill="#dedeff" stroke="#8c8cf2" stroke-width="1.1"/>
<rect x="617.6" y="334.8" width="3.7" height="5" fill="#ffffff" stroke="#7b7bf0" stroke-width="0.9" rx="0.8"/>
<rect x="617.6" y="341.6" width="3.7" height="5" fill="#ffffff" stroke="#7b7bf0" stroke-width="0.9" rx="0.8"/>
<rect x="617.6" y="348.3" width="3.7" height="5" fill="#ffffff" stroke="#7b7bf0" stroke-width="0.9" rx="0.8"/>
<rect x="624.4" y="334.8" width="3.7" height="5" fill="#ffffff" stroke="#7b7bf0" stroke-width="0.9" rx="0.8"/>
<rect x="624.4" y="341.6" width="3.7" height="5" fill="#ffffff" stroke="#7b7bf0" stroke-width="0.9" rx="0.8"/>
<rect x="624.4" y="348.3" width="3.7" height="5" fill="#ffffff" stroke="#7b7bf0" stroke-width="0.9" rx="0.8"/>
<path d="M539.8 350.3 V370.0 H525.3" fill="none" stroke="#444" stroke-width="0.9"/>
<path d="M546.6 350.3 V370.0 H557.3" fill="none" stroke="#444" stroke-width="0.9"/>
<path d="M597.5 350.3 V370.0 H586.7" fill="none" stroke="#444" stroke-width="0.9"/>
<path d="M604.3 350.3 V370.0 H617.9" fill="none" stroke="#444" stroke-width="0.9"/>
<rect x="491.59999999999997" y="360.40000000000003" width="38.3" height="8.7" fill="#ffffff" stroke="#7c7c7c" stroke-width="1.1" rx="1"/>
<rect x="519.5" y="361.20000000000005" width="8.3" height="7.1" fill="#f6f4ff" stroke="#9a92e2" stroke-width="1"/>
<rect x="521.9" y="362.90000000000003" width="3.2" height="3.8" fill="none" stroke="#8c84dc" stroke-width="0.6"/>
<line x1="521.9" y1="364.8" x2="525.1" y2="364.8" stroke="#8c84dc" stroke-width="0.6" />
<text x="506.2" y="366.1" font-size="3.2" fill="#222" textLength="7" lengthAdjust="spacingAndGlyphs" font-weight="bold" stroke="#222" stroke-width="0.22">DIE1</text>
<rect x="494.8" y="369.1" width="2.3" height="2.3" fill="#1212e0" rx="0.5"/>
<rect x="498.9" y="369.1" width="2.3" height="2.3" fill="#1212e0" rx="0.5"/>
<rect x="503.1" y="369.1" width="2.3" height="2.3" fill="#1212e0" rx="0.5"/>
<rect x="507.4" y="369.1" width="2.3" height="2.3" fill="#1212e0" rx="0.5"/>
<rect x="511.5" y="369.1" width="2.3" height="2.3" fill="#1212e0" rx="0.5"/>
<rect x="515.8" y="369.1" width="2.3" height="2.3" fill="#1212e0" rx="0.5"/>
<rect x="520.0" y="369.1" width="2.3" height="2.3" fill="#1212e0" rx="0.5"/>
<rect x="524.1" y="369.1" width="2.3" height="2.3" fill="#1212e0" rx="0.5"/>
<rect x="553.0" y="360.40000000000003" width="38.3" height="8.7" fill="#ffffff" stroke="#7c7c7c" stroke-width="1.1" rx="1"/>
<rect x="555.3" y="361.20000000000005" width="8.3" height="7.1" fill="#f6f4ff" stroke="#9a92e2" stroke-width="1"/>
<rect x="557.6999999999999" y="362.90000000000003" width="3.2" height="3.8" fill="none" stroke="#8c84dc" stroke-width="0.6"/>
<line x1="557.6999999999999" y1="364.8" x2="560.9" y2="364.8" stroke="#8c84dc" stroke-width="0.6" />
<rect x="580.9" y="361.20000000000005" width="8.3" height="7.1" fill="#f6f4ff" stroke="#9a92e2" stroke-width="1"/>
<rect x="583.3" y="362.90000000000003" width="3.2" height="3.8" fill="none" stroke="#8c84dc" stroke-width="0.6"/>
<line x1="583.3" y1="364.8" x2="586.5" y2="364.8" stroke="#8c84dc" stroke-width="0.6" />
<text x="567.3" y="366.1" font-size="3.2" fill="#222" textLength="8" lengthAdjust="spacingAndGlyphs" font-weight="bold" stroke="#222" stroke-width="0.22">DIE2</text>
<rect x="556.1" y="369.1" width="2.3" height="2.3" fill="#1212e0" rx="0.5"/>
<rect x="560.4" y="369.1" width="2.3" height="2.3" fill="#1212e0" rx="0.5"/>
<rect x="564.5" y="369.1" width="2.3" height="2.3" fill="#1212e0" rx="0.5"/>
<rect x="568.8" y="369.1" width="2.3" height="2.3" fill="#1212e0" rx="0.5"/>
<rect x="572.9" y="369.1" width="2.3" height="2.3" fill="#1212e0" rx="0.5"/>
<rect x="577.1" y="369.1" width="2.3" height="2.3" fill="#1212e0" rx="0.5"/>
<rect x="581.4" y="369.1" width="2.3" height="2.3" fill="#1212e0" rx="0.5"/>
<rect x="585.5" y="369.1" width="2.3" height="2.3" fill="#1212e0" rx="0.5"/>
<rect x="613.5999999999999" y="360.40000000000003" width="38.3" height="8.7" fill="#ffffff" stroke="#7c7c7c" stroke-width="1.1" rx="1"/>
<rect x="615.8999999999999" y="361.20000000000005" width="8.3" height="7.1" fill="#f6f4ff" stroke="#9a92e2" stroke-width="1"/>
<rect x="618.2999999999998" y="362.90000000000003" width="3.2" height="3.8" fill="none" stroke="#8c84dc" stroke-width="0.6"/>
<line x1="618.2999999999998" y1="364.8" x2="621.4999999999999" y2="364.8" stroke="#8c84dc" stroke-width="0.6" />
<text x="628.6" y="366.1" font-size="3.2" fill="#222" textLength="7" lengthAdjust="spacingAndGlyphs" font-weight="bold" stroke="#222" stroke-width="0.22">DIE3</text>
<rect x="616.7" y="369.1" width="2.3" height="2.3" fill="#1212e0" rx="0.5"/>
<rect x="620.9" y="369.1" width="2.3" height="2.3" fill="#1212e0" rx="0.5"/>
<rect x="625.1" y="369.1" width="2.3" height="2.3" fill="#1212e0" rx="0.5"/>
<rect x="629.3" y="369.1" width="2.3" height="2.3" fill="#1212e0" rx="0.5"/>
<rect x="633.5" y="369.1" width="2.3" height="2.3" fill="#1212e0" rx="0.5"/>
<rect x="637.7" y="369.1" width="2.3" height="2.3" fill="#1212e0" rx="0.5"/>
<rect x="641.9" y="369.1" width="2.3" height="2.3" fill="#1212e0" rx="0.5"/>
<rect x="646.1" y="369.1" width="2.3" height="2.3" fill="#1212e0" rx="0.5"/>
<line x1="297.6" y1="196.8" x2="317.6" y2="196.8" stroke="#d42d96" stroke-width="1.2" />
<rect x="296.4" y="196" width="1.6" height="1.6" fill="#4a6ae8"/>
<line x1="501" y1="196.8" x2="517.2" y2="196.8" stroke="#d42d96" stroke-width="1.2" />
<rect x="499.8" y="196" width="1.6" height="1.6" fill="#4a6ae8"/>
<rect x="193.0" y="343.9" width="104.3" height="14.4" fill="#0000cc"/>
<rect x="188.5" y="340.4" width="106.6" height="16" fill="#ffffff" stroke="#6464ee" stroke-width="1.1" rx="1"/>
<line x1="218.4" y1="340.4" x2="218.4" y2="356.4" stroke="#5050e8" stroke-width="1.1" />
<rect x="191.8" y="344.79999999999995" width="25" height="8.9" fill="#6b8e23"/>
<rect x="193.0" y="341.29999999999995" width="3.6" height="3.5" fill="#0000ff"/>
<rect x="198.7" y="341.29999999999995" width="6.2" height="3.5" fill="#0000ff"/>
<rect x="206.2" y="341.29999999999995" width="3.6" height="3.5" fill="#0000ff"/>
<rect x="194.7" y="344.79999999999995" width="5.6" height="6.2" fill="#d87810" stroke="#38520a" stroke-width="0.7"/>
<rect x="196.39999999999998" y="344.79999999999995" width="2.2" height="3.6" fill="#6b8e23"/>
<rect x="201.6" y="344.79999999999995" width="5.6" height="6.2" fill="#d87810" stroke="#38520a" stroke-width="0.7"/>
<rect x="203.29999999999998" y="344.79999999999995" width="2.2" height="3.6" fill="#6b8e23"/>
<path d="M215.7 342.4 L216.9 343.79999999999995 L213.7 348.59999999999997 Q214.5 350.79999999999995 212.9 352.2 Q211.5 353.2 209.9 352.59999999999997 L211.9 350.79999999999995 L210.9 349.2 L208.5 350.0 Q208.7 347.79999999999995 210.5 347.2 Q211.7 346.79999999999995 212.5 347.2 Z" fill="#ffffff" stroke="#5a5ae8" stroke-width="0.5"/>
<text x="229.2" y="350.9" font-size="7" fill="#222222" textLength="55" lengthAdjust="spacingAndGlyphs" stroke="#222" stroke-width="0.12">Chiplet PHY Setup</text>
<rect x="333.0" y="343.9" width="104.10000000000001" height="14.4" fill="#0000cc"/>
<rect x="328.5" y="340.4" width="106.4" height="16" fill="#ffffff" stroke="#6464ee" stroke-width="1.1" rx="1"/>
<line x1="358.4" y1="340.4" x2="358.4" y2="356.4" stroke="#5050e8" stroke-width="1.1" />
<rect x="331.2" y="346.5" width="17.8" height="7" fill="#6b8e23"/>
<rect x="331.2" y="344.2" width="4.2" height="3.2" fill="#0000ff"/>
<rect x="336.7" y="344.2" width="4.2" height="3.2" fill="#0000ff"/>
<rect x="342.2" y="344.2" width="4.2" height="3.2" fill="#0000ff"/>
<rect x="333.5" y="347.4" width="4.4" height="4.6" fill="#d87810" stroke="#38520a" stroke-width="0.7"/>
<rect x="334.8" y="347.4" width="1.8" height="2.6" fill="#6b8e23"/>
<rect x="339.1" y="347.4" width="4.4" height="4.6" fill="#d87810" stroke="#38520a" stroke-width="0.7"/>
<rect x="340.40000000000003" y="347.4" width="1.8" height="2.6" fill="#6b8e23"/>
<circle cx="351.3" cy="347.79999999999995" r="4.7" fill="#ffffff" stroke="#2a2ae6" stroke-width="1.5" stroke-dasharray="2.2 1.5"/>
<circle cx="351.3" cy="347.79999999999995" r="2.5" fill="#2a2ae6"/>
<circle cx="351.3" cy="347.79999999999995" r="1.1" fill="#ffffff"/>
<text x="363.5" y="350.9" font-size="7" fill="#222222" textLength="66.2" lengthAdjust="spacingAndGlyphs" stroke="#222" stroke-width="0.12">Chiplet PHY Simulator</text>
<defs>
<linearGradient id="gUndo" x1="0" y1="0" x2="1" y2="0"><stop offset="0" stop-color="#1f98ea"/><stop offset="1" stop-color="#1a2590"/></linearGradient>
<linearGradient id="gRedo" x1="0" y1="0" x2="1" y2="0"><stop offset="0" stop-color="#7e7e7e"/><stop offset="1" stop-color="#b4b4b4"/></linearGradient>
<linearGradient id="gFold" x1="0" y1="0" x2="0" y2="1"><stop offset="0" stop-color="#fbe2a6"/><stop offset="1" stop-color="#f1c066"/></linearGradient>
<linearGradient id="gSave" x1="0" y1="0" x2="1" y2="1"><stop offset="0" stop-color="#2d6fe0"/><stop offset="1" stop-color="#12409c"/></linearGradient>
<linearGradient id="gPrn" x1="0" y1="0" x2="0" y2="1"><stop offset="0" stop-color="#8fb4d8"/><stop offset="1" stop-color="#4f7fb4"/></linearGradient>
<radialGradient id="gRed" cx="0.4" cy="0.3" r="0.8"><stop offset="0" stop-color="#f0503a"/><stop offset="1" stop-color="#b01208"/></radialGradient>
<radialGradient id="gGrn" cx="0.4" cy="0.3" r="0.8"><stop offset="0" stop-color="#6cd05a"/><stop offset="1" stop-color="#1f8a1c"/></radialGradient>
<radialGradient id="gHelp" cx="0.4" cy="0.3" r="0.8"><stop offset="0" stop-color="#7f8cff"/><stop offset="1" stop-color="#1414c8"/></radialGradient>
<linearGradient id="gBlueArr" x1="0" y1="0" x2="1" y2="1"><stop offset="0" stop-color="#6fb6f0"/><stop offset="1" stop-color="#1462c0"/></linearGradient>
</defs>
<path d="M11.6 42.4 H17.6 L21.8 46.4 V56.8 H11.6 Z" fill="#ffffff" stroke="#9a9a9a" stroke-width="0.9"/>
<path d="M17.6 42.4 V46.4 H21.8" fill="#e4e4e4" stroke="#8a8a8a" stroke-width="0.8"/>
<path d="M29.2 56.6 V45 q0 -0.9 0.9 -0.9 h4.2 l1.2 1.6 h5.6 q0.9 0 0.9 0.9 V56.6 Z" fill="#e8bc6c" stroke="#cf9c48" stroke-width="0.7"/>
<path d="M29.4 56.8 L31.6 48.6 H43.6 L41.2 56.8 Z" fill="url(#gFold)" stroke="#d8a650" stroke-width="0.6"/>
<path d="M36.2 44.6 q3 -2.6 6 -0.8" fill="none" stroke="#111" stroke-width="1.2"/>
<path d="M43.4 42.2 L43.2 46.2 L39.8 44.4 Z" fill="#111"/>
<rect x="48.1" y="42.2" width="13.8" height="14.7" fill="url(#gSave)" rx="1.2"/>
<rect x="50.3" y="43" width="9.4" height="6.6" fill="#e9e9ea" rx="0.6"/>
<line x1="50.8" y1="45" x2="59.2" y2="45" stroke="#c6c6c8" stroke-width="0.8" />
<rect x="52" y="52" width="7.6" height="4.9" fill="#c9ccd6"/>
<rect x="53.4" y="52.6" width="1.7" height="4.3" fill="#1d3f98"/>
<rect x="67.2" y="48.6" width="14.2" height="6.4" fill="url(#gPrn)" stroke="#5a7ea8" stroke-width="0.7" rx="1.2"/>
<path d="M70.9 50 V42.4 H75.2 L77.9 45 V50 Z" fill="#ffffff" stroke="#8c8c8c" stroke-width="0.8"/>
<rect x="69" y="50" width="10.8" height="3.6" fill="#7ea4cc"/>
<rect x="69.2" y="54.2" width="10.2" height="2.8" fill="#eeeeee" stroke="#8a8a8a" stroke-width="0.7"/>
<rect x="79.6" y="49.2" width="1.2" height="1.3" fill="#e04a3a"/>
<rect x="79.6" y="50.7" width="1.2" height="1.3" fill="#e0c83a"/>
<rect x="79.6" y="52.2" width="1.2" height="1.3" fill="#4ab04a"/>
<line x1="86.5" y1="42.5" x2="86.5" y2="57.5" stroke="#cfcfcf" stroke-width="1" />
<path d="M94.3 42.9 V53.6 L96.7 51.6 L98.9 56.6 L100.6 55.9 L98.6 51.1 L101.9 50.6 Z" fill="#ffffff" stroke="#555" stroke-width="0.9"/>
<path d="M123.4 43.2 Q116.6 47.2 110.8 56" fill="none" stroke="#0a0a0a" stroke-width="2.7" stroke-linecap="round"/>
<path d="M114.9 45 Q118 48.6 121.2 53.2" fill="none" stroke="#0a0a0a" stroke-width="2.7" stroke-linecap="round"/>
<path d="M133.4 44.9 Q138 41.4 141.2 43.1 Q143.2 47 140.6 51.6 Q138.4 55.2 133.9 57.1 L133.3 56.2 Q137.4 53.4 138.5 50 Q139.6 46.6 138.3 45.7 Q137 45.1 135.7 47.3 L137.7 48.5 L130.3 51.1 L130 42.5 Z" fill="url(#gUndo)"/>
<path d="M157.5 44.9 Q152.9 41.4 149.7 43.1 Q147.7 47 150.3 51.6 Q152.5 55.2 157.0 57.1 L157.6 56.2 Q153.5 53.4 152.4 50 Q151.3 46.6 152.6 45.7 Q153.9 45.1 155.2 47.3 L153.2 48.5 L160.6 51.1 L160.9 42.5 Z" fill="url(#gRedo)"/>
<line x1="165.6" y1="41.5" x2="165.6" y2="58.5" stroke="#cfcfcf" stroke-width="1" />
<rect x="168.7" y="42.6" width="1.2" height="0.9" fill="#bdbdbd"/>
<rect x="168.7" y="45.1" width="1.2" height="0.9" fill="#bdbdbd"/>
<rect x="168.7" y="47.6" width="1.2" height="0.9" fill="#bdbdbd"/>
<rect x="168.7" y="50.1" width="1.2" height="0.9" fill="#bdbdbd"/>
<rect x="168.7" y="52.6" width="1.2" height="0.9" fill="#bdbdbd"/>
<rect x="168.7" y="55.1" width="1.2" height="0.9" fill="#bdbdbd"/>
<rect x="168.7" y="57.6" width="1.2" height="0.9" fill="#bdbdbd"/>
<rect x="179.6" y="46.3" width="6.4" height="6.5" fill="#3d86d6"/>
<line x1="181.7" y1="46.3" x2="181.7" y2="52.8" stroke="#9cc8f4" stroke-width="0.6" />
<line x1="183.9" y1="46.3" x2="183.9" y2="52.8" stroke="#9cc8f4" stroke-width="0.6" />
<line x1="179.6" y1="48.4" x2="186" y2="48.4" stroke="#9cc8f4" stroke-width="0.6" />
<line x1="179.6" y1="50.6" x2="186" y2="50.6" stroke="#9cc8f4" stroke-width="0.6" />
<path d="M182.8 46 V43.6 M182.8 53 V55.6 M179.4 49.5 H176.8 M186.2 49.5 H188.8" fill="none" stroke="#111" stroke-width="1.3"/>
<path d="M182.8 42 L184.6 44.4 H181 Z M182.8 57.2 L184.6 54.8 H181 Z M175 49.5 L177.6 47.7 V51.3 Z M190.4 49.5 L187.8 47.7 V51.3 Z" fill="#111"/>
<rect x="194.4" y="42.4" width="12" height="12.4" fill="#e9f1cb" stroke="#3a46d0" stroke-width="1" stroke-dasharray="1.6 1.5"/>
<circle cx="202.6" cy="49.8" r="4.7" fill="#dcebf8" stroke="#4a4a4a" stroke-width="1.1"/>
<path d="M202.6 49.8 V45.6 A4.2 4.2 0 0 0 198.4 49.8 Z" fill="#e8141c"/>
<line x1="205.8" y1="53.2" x2="208.6" y2="56.4" stroke="#111" stroke-width="1.8" />
<circle cx="222.8" cy="46.8" r="5.4" fill="url(#gRed)"/>
<text x="220" y="50.2" font-size="8.6" fill="#ffffff" font-weight="bold">2</text>
<line x1="218.4" y1="52.4" x2="222.6" y2="56.6" stroke="#111" stroke-width="1.7" />
<circle cx="216.3" cy="50" r="2.7" fill="#e8eef4" stroke="#333" stroke-width="0.9"/>
<path d="M214.7 50 H217.9 M216.3 48.4 V51.6" fill="none" stroke="#000" stroke-width="1"/>
<circle cx="242.2" cy="46.8" r="5.4" fill="url(#gGrn)"/>
<text x="239.4" y="50.2" font-size="8.6" fill="#ffffff" font-weight="bold">2</text>
<line x1="237.5" y1="52.4" x2="241.7" y2="56.6" stroke="#111" stroke-width="1.7" />
<circle cx="235.4" cy="50" r="2.7" fill="#e8eef4" stroke="#333" stroke-width="0.9"/>
<path d="M233.8 50 H237" fill="none" stroke="#000" stroke-width="1"/>
<line x1="250.4" y1="41.5" x2="250.4" y2="58.5" stroke="#cfcfcf" stroke-width="1" />
<rect x="253.4" y="42.6" width="1.2" height="0.9" fill="#bdbdbd"/>
<rect x="253.4" y="45.1" width="1.2" height="0.9" fill="#bdbdbd"/>
<rect x="253.4" y="47.6" width="1.2" height="0.9" fill="#bdbdbd"/>
<rect x="253.4" y="50.1" width="1.2" height="0.9" fill="#bdbdbd"/>
<rect x="253.4" y="52.6" width="1.2" height="0.9" fill="#bdbdbd"/>
<rect x="253.4" y="55.1" width="1.2" height="0.9" fill="#bdbdbd"/>
<rect x="253.4" y="57.6" width="1.2" height="0.9" fill="#bdbdbd"/>
<path d="M260.4 49.7 L263 45.3 H268.1 L270.8 49.7 L268.1 54.2 H263 Z" fill="none" stroke="#7a35a8" stroke-width="1.1"/>
<line x1="270.8" y1="49.7" x2="273" y2="49.7" stroke="#7a35a8" stroke-width="1.1" />
<rect x="273" y="48.3" width="2.2" height="2.8" fill="#e8141c"/>
<path d="M286.7 42 V49.2 M280.6 49.2 H293 M282.6 52.8 H291 M284.4 56.3 H289.2" fill="none" stroke="#7a35a8" stroke-width="1.3"/>
<rect x="298.4" y="42.4" width="14.5" height="7.8" fill="#fdfd9e" stroke="#ff6a6a" stroke-width="1" rx="1"/>
<text x="299.4" y="49.1" font-size="6.8" fill="#33331a" textLength="12.6" lengthAdjust="spacingAndGlyphs" font-weight="bold">0110</text>
<text x="298.3" y="56.9" font-size="6.7" fill="#111" textLength="14.8" lengthAdjust="spacingAndGlyphs" font-weight="bold">VAR</text>
<line x1="319.4" y1="43.8" x2="330.6" y2="55.6" stroke="#6a2aa0" stroke-width="1.3" />
<rect x="317.8" y="42.3" width="3.2" height="3.1" fill="#f0101c"/>
<rect x="329" y="54" width="3.3" height="3.3" fill="#f0101c"/>
<line x1="336.6" y1="47.4" x2="341.6" y2="47.4" stroke="#e8141c" stroke-width="1.2" />
<path d="M346.4 42.3 L351.5 47.4 L346.4 52.5 L341.3 47.4 Z" fill="#e8202a"/>
<path d="M346.4 43.6 L347.6 45.2 H345.2 Z M346.4 51.2 L347.6 49.6 H345.2 Z M342.6 47.4 L344.2 46.2 V48.6 Z M350.2 47.4 L348.6 46.2 V48.6 Z" fill="#ffffff"/>
<rect x="345.2" y="46.2" width="2.4" height="2.4" fill="#e8141c" stroke="#ffffff" stroke-width="0.4"/>
<text x="336.4" y="57" font-size="5.6" fill="#111" textLength="14.6" lengthAdjust="spacingAndGlyphs" font-weight="bold">NAME</text>
<path d="M356.2 46.6 Q361.6 39.6 368.2 45 L370 43.8 L369.4 49.2 L364.2 47.6 L366.2 46.4 Q361.8 43 357.8 47.4 Z" fill="url(#gBlueArr)"/>
<line x1="360.5" y1="46" x2="360.5" y2="57" stroke="#111" stroke-width="0.9" stroke-dasharray="1.4 0.9"/>
<line x1="355.6" y1="52.7" x2="363" y2="52.7" stroke="#111" stroke-width="0.9" stroke-dasharray="1.4 0.9"/>
<rect x="362.6" y="50" width="8.4" height="5.2" fill="#3f9a2c" rx="1.4"/>
<rect x="364.4" y="51.1" width="6.4" height="3" fill="#ecd820"/>
<rect x="359.3" y="51.3" width="2.4" height="2.8" fill="#e8141c"/>
<line x1="373.7" y1="41.5" x2="373.7" y2="58.5" stroke="#cfcfcf" stroke-width="1" />
<rect x="376.7" y="42.6" width="1.2" height="0.9" fill="#bdbdbd"/>
<rect x="376.7" y="45.1" width="1.2" height="0.9" fill="#bdbdbd"/>
<rect x="376.7" y="47.6" width="1.2" height="0.9" fill="#bdbdbd"/>
<rect x="376.7" y="50.1" width="1.2" height="0.9" fill="#bdbdbd"/>
<rect x="376.7" y="52.6" width="1.2" height="0.9" fill="#bdbdbd"/>
<rect x="376.7" y="55.1" width="1.2" height="0.9" fill="#bdbdbd"/>
<rect x="376.7" y="57.6" width="1.2" height="0.9" fill="#bdbdbd"/>
<rect x="383.2" y="42.2" width="7.4" height="6.6" fill="#f6f2fc" stroke="#a4d2f0" stroke-width="0.9"/>
<path d="M384.4 45.400000000000006 h1.2 v-1.4 v2.6 M386.6 44.6 v2.2 h1.6 l0.8 0.8" fill="none" stroke="#9a4ac0" stroke-width="0.8"/>
<path d="M384.4 47.6 l1 -1.2 l1 1.2 l1 -1.2 l1 1.2 l0.8 -1" fill="none" stroke="#8a3ab0" stroke-width="0.9"/>
<rect x="383.2" y="50.3" width="7.4" height="6.6" fill="#f6f2fc" stroke="#a4d2f0" stroke-width="0.9"/>
<path d="M384.4 53.5 h1.2 v-1.4 v2.6 M386.6 52.699999999999996 v2.2 h1.6 l0.8 0.8" fill="none" stroke="#9a4ac0" stroke-width="0.8"/>
<path d="M384.4 55.699999999999996 l1 -1.2 l1 1.2 l1 -1.2 l1 1.2 l0.8 -1" fill="none" stroke="#8a3ab0" stroke-width="0.9"/>
<line x1="393.4" y1="45.6" x2="397.8" y2="45.6" stroke="#0a0a0a" stroke-width="1.6" />
<path d="M391 45.6 L394.4 43 V48.2 Z" fill="#0a0a0a"/>
<g transform="translate(409.6 49.5)">
<rect x="-1.4" y="-7" width="2.8" height="3" rx="0.6" fill="#bca84a" stroke="#6e6024" stroke-width="0.5" transform="rotate(0)"/>
<rect x="-1.4" y="-7" width="2.8" height="3" rx="0.6" fill="#bca84a" stroke="#6e6024" stroke-width="0.5" transform="rotate(45)"/>
<rect x="-1.4" y="-7" width="2.8" height="3" rx="0.6" fill="#bca84a" stroke="#6e6024" stroke-width="0.5" transform="rotate(90)"/>
<rect x="-1.4" y="-7" width="2.8" height="3" rx="0.6" fill="#bca84a" stroke="#6e6024" stroke-width="0.5" transform="rotate(135)"/>
<rect x="-1.4" y="-7" width="2.8" height="3" rx="0.6" fill="#bca84a" stroke="#6e6024" stroke-width="0.5" transform="rotate(180)"/>
<rect x="-1.4" y="-7" width="2.8" height="3" rx="0.6" fill="#bca84a" stroke="#6e6024" stroke-width="0.5" transform="rotate(225)"/>
<rect x="-1.4" y="-7" width="2.8" height="3" rx="0.6" fill="#bca84a" stroke="#6e6024" stroke-width="0.5" transform="rotate(270)"/>
<rect x="-1.4" y="-7" width="2.8" height="3" rx="0.6" fill="#bca84a" stroke="#6e6024" stroke-width="0.5" transform="rotate(315)"/>
<circle cx="0" cy="0" r="5.2" fill="#bca84a" stroke="#6e6024" stroke-width="0.6"/>
<circle cx="0" cy="0" r="3" fill="#94864a" stroke="#5a4e1c" stroke-width="0.5"/>
<circle cx="0" cy="-0.2" r="1.9" fill="#4f82e0"/>
<circle cx="-0.3" cy="-0.8" r="0.7" fill="#bcd4ff"/>
</g>
<path d="M420.6 47 L426.2 43.4 V50.6 Z" fill="#bcbcbc"/>
<path d="M436.6 47 L431 43.4 V50.6 Z" fill="#bcbcbc"/>
<path d="M426.7 42.6 V50 Q426.7 52 428.6 52 Q430.5 52 430.5 50 V42.6" fill="none" stroke="#b57a2a" stroke-width="1.4"/>
<line x1="428.6" y1="52" x2="428.6" y2="56.8" stroke="#b57a2a" stroke-width="1.5" />
<path d="M448 42.3 L454.4 48 H451.6 V51.2 H444.4 V48 H441.6 Z" fill="#2ca44a"/>
<path d="M444.4 51.2 H451.6 L455 57 H441 Z" fill="#e8202a"/>
<rect x="459.8" y="42.4" width="15" height="14.6" fill="#ffffff" stroke="#a8cdee" stroke-width="0.7" rx="0.6"/>
<line x1="462.3" y1="42.6" x2="462.3" y2="56.8" stroke="#bcdcf6" stroke-width="0.6" />
<line x1="460" y1="44.85" x2="474.6" y2="44.85" stroke="#bcdcf6" stroke-width="0.6" />
<line x1="464.8" y1="42.6" x2="464.8" y2="56.8" stroke="#bcdcf6" stroke-width="0.6" />
<line x1="460" y1="47.3" x2="474.6" y2="47.3" stroke="#bcdcf6" stroke-width="0.6" />
<line x1="467.3" y1="42.6" x2="467.3" y2="56.8" stroke="#bcdcf6" stroke-width="0.6" />
<line x1="460" y1="49.75" x2="474.6" y2="49.75" stroke="#bcdcf6" stroke-width="0.6" />
<line x1="469.8" y1="42.6" x2="469.8" y2="56.8" stroke="#bcdcf6" stroke-width="0.6" />
<line x1="460" y1="52.2" x2="474.6" y2="52.2" stroke="#bcdcf6" stroke-width="0.6" />
<line x1="472.3" y1="42.6" x2="472.3" y2="56.8" stroke="#bcdcf6" stroke-width="0.6" />
<line x1="460" y1="54.65" x2="474.6" y2="54.65" stroke="#bcdcf6" stroke-width="0.6" />
<path d="M460.6 51.4 l1.6 -3.6 l1.4 3.4 l1.4 -3.4 l1.4 3.4 l1.4 -3.4 l1.4 3.4 l1.4 -5.4 l1.4 5.4 l1.2 -3.6" fill="none" stroke="#d8202a" stroke-width="1.1"/>
<circle cx="470.6" cy="43.8" r="0.9" fill="#f0a020"/>
<rect x="4.6" y="63.2" width="1.2" height="0.9" fill="#bdbdbd"/>
<rect x="4.6" y="65.7" width="1.2" height="0.9" fill="#bdbdbd"/>
<rect x="4.6" y="68.2" width="1.2" height="0.9" fill="#bdbdbd"/>
<rect x="4.6" y="70.7" width="1.2" height="0.9" fill="#bdbdbd"/>
<rect x="4.6" y="73.2" width="1.2" height="0.9" fill="#bdbdbd"/>
<rect x="4.6" y="75.7" width="1.2" height="0.9" fill="#bdbdbd"/>
<rect x="4.6" y="42.6" width="1.2" height="0.9" fill="#bdbdbd"/>
<rect x="4.6" y="45.1" width="1.2" height="0.9" fill="#bdbdbd"/>
<rect x="4.6" y="47.6" width="1.2" height="0.9" fill="#bdbdbd"/>
<rect x="4.6" y="50.1" width="1.2" height="0.9" fill="#bdbdbd"/>
<rect x="4.6" y="52.6" width="1.2" height="0.9" fill="#bdbdbd"/>
<rect x="4.6" y="55.1" width="1.2" height="0.9" fill="#bdbdbd"/>
<rect x="4.6" y="57.6" width="1.2" height="0.9" fill="#bdbdbd"/>
<rect x="9.9" y="62.8" width="14.9" height="0.8" fill="#6a5a50"/>
<rect x="9.9" y="63.6" width="14.9" height="5.0" fill="#f29494"/>
<rect x="9.9" y="68.6" width="14.9" height="1.7" fill="#fbdc88"/>
<rect x="9.9" y="70.3" width="14.9" height="1.7" fill="#8f9656"/>
<rect x="9.9" y="72" width="14.9" height="2.2" fill="#d2e890"/>
<rect x="9.9" y="74.2" width="14.9" height="3.6" fill="#b7d7f0"/>
<rect x="12" y="66.5" width="4" height="1.6" fill="#000"/>
<rect x="18.5" y="66.5" width="4" height="1.6" fill="#000"/>
<text x="10.8" y="77.3" font-size="6.8" fill="#16243c" textLength="12.8" lengthAdjust="spacingAndGlyphs" font-weight="bold">Z=50</text>
<rect x="29" y="62.8" width="14.9" height="4.6" fill="#f29494"/>
<rect x="29" y="67.4" width="14.9" height="3.2" fill="#fbdc88"/>
<rect x="29" y="70.6" width="14.9" height="4.0" fill="#d2e890"/>
<rect x="29" y="74.6" width="14.9" height="3.2" fill="#b7d7f0"/>
<path d="M29 66.6 H35.6 M29 70.3 H34 M33.6 75 H36 M35.5 66 V75.6" fill="none" stroke="#1a1a1a" stroke-width="1.5"/>
<path d="M37.9 66 V75.6 M37.9 66.6 H39.4 M39.4 70.3 H43.9 M37.9 75 H43.9" fill="none" stroke="#1a1a1a" stroke-width="1.5"/>
<line x1="36.7" y1="65.6" x2="36.7" y2="76" stroke="#ffffff" stroke-width="0.8" />
<rect x="48.2" y="62.8" width="14.7" height="15" fill="#ffffff"/>
<rect x="52.2" y="64" width="6.6" height="13" fill="#ffffff" stroke="#9090f8" stroke-width="1.1" rx="1"/>
<line x1="49" y1="65" x2="52" y2="65" stroke="#ff6a4a" stroke-width="0.9" stroke-dasharray="1 0.6"/>
<line x1="59.2" y1="65" x2="62.2" y2="65" stroke="#ff6a4a" stroke-width="0.9" stroke-dasharray="1 0.6"/>
<line x1="49" y1="67.8" x2="52" y2="67.8" stroke="#ff6a4a" stroke-width="0.9" stroke-dasharray="1 0.6"/>
<line x1="59.2" y1="67.8" x2="62.2" y2="67.8" stroke="#ff6a4a" stroke-width="0.9" stroke-dasharray="1 0.6"/>
<line x1="49" y1="70.5" x2="52" y2="70.5" stroke="#ff6a4a" stroke-width="0.9" stroke-dasharray="1 0.6"/>
<line x1="59.2" y1="70.5" x2="62.2" y2="70.5" stroke="#ff6a4a" stroke-width="0.9" stroke-dasharray="1 0.6"/>
<line x1="49" y1="73.3" x2="52" y2="73.3" stroke="#ff6a4a" stroke-width="0.9" stroke-dasharray="1 0.6"/>
<line x1="59.2" y1="73.3" x2="62.2" y2="73.3" stroke="#ff6a4a" stroke-width="0.9" stroke-dasharray="1 0.6"/>
<line x1="49" y1="76" x2="52" y2="76" stroke="#ff6a4a" stroke-width="0.9" stroke-dasharray="1 0.6"/>
<line x1="59.2" y1="76" x2="62.2" y2="76" stroke="#ff6a4a" stroke-width="0.9" stroke-dasharray="1 0.6"/>
<text x="53.4" y="73.6" font-size="8.8" fill="#111" textLength="4.2" lengthAdjust="spacingAndGlyphs" font-weight="bold">S</text>
<rect x="67.2" y="62.9" width="14.8" height="14.8" fill="#ffffff" stroke="#8cb6da" stroke-width="0.9" rx="0.3"/>
<line x1="69.67" y1="63.1" x2="69.67" y2="77.5" stroke="#b6d8f2" stroke-width="0.6" />
<line x1="67.4" y1="65.37" x2="81.8" y2="65.37" stroke="#b6d8f2" stroke-width="0.6" />
<line x1="72.14" y1="63.1" x2="72.14" y2="77.5" stroke="#b6d8f2" stroke-width="0.6" />
<line x1="67.4" y1="67.84" x2="81.8" y2="67.84" stroke="#b6d8f2" stroke-width="0.6" />
<line x1="74.61" y1="63.1" x2="74.61" y2="77.5" stroke="#b6d8f2" stroke-width="0.6" />
<line x1="67.4" y1="70.31" x2="81.8" y2="70.31" stroke="#b6d8f2" stroke-width="0.6" />
<line x1="77.08" y1="63.1" x2="77.08" y2="77.5" stroke="#b6d8f2" stroke-width="0.6" />
<line x1="67.4" y1="72.78" x2="81.8" y2="72.78" stroke="#b6d8f2" stroke-width="0.6" />
<line x1="79.55" y1="63.1" x2="79.55" y2="77.5" stroke="#b6d8f2" stroke-width="0.6" />
<line x1="67.4" y1="75.25" x2="81.8" y2="75.25" stroke="#b6d8f2" stroke-width="0.6" />
<text x="67.6" y="74.1" font-size="11" fill="#1c4c94" textLength="6.6" lengthAdjust="spacingAndGlyphs" font-weight="bold" font-style="italic">S</text>
<path d="M74.4 71.4 L76 73.6 L81.4 67.2" fill="none" stroke="#2fa63a" stroke-width="1.3"/>
<rect x="86.1" y="62.8" width="15" height="15" fill="#ff0000"/>
<line x1="92.2" y1="62.8" x2="92.2" y2="77.8" stroke="#ffffff" stroke-width="0.8" />
<line x1="88" y1="65.7" x2="91.4" y2="65.7" stroke="#ffffff" stroke-width="1.1" />
<line x1="88" y1="68.9" x2="91.4" y2="68.9" stroke="#ffffff" stroke-width="1.1" />
<line x1="88" y1="72.2" x2="91.4" y2="72.2" stroke="#ffffff" stroke-width="1.1" />
<line x1="88" y1="75.5" x2="91.4" y2="75.5" stroke="#ffffff" stroke-width="1.1" />
<path d="M93 68.6 H96.6 V66 L99.8 70.6 L96.6 75.2 V72.6 H93 Z" fill="#ffffff"/>
<rect x="105.2" y="62.9" width="14.8" height="14.8" fill="#ffffff" stroke="#8cb6da" stroke-width="0.9" rx="0.3"/>
<line x1="107.67" y1="63.1" x2="107.67" y2="77.5" stroke="#b6d8f2" stroke-width="0.6" />
<line x1="105.4" y1="65.37" x2="119.8" y2="65.37" stroke="#b6d8f2" stroke-width="0.6" />
<line x1="110.14" y1="63.1" x2="110.14" y2="77.5" stroke="#b6d8f2" stroke-width="0.6" />
<line x1="105.4" y1="67.84" x2="119.8" y2="67.84" stroke="#b6d8f2" stroke-width="0.6" />
<line x1="112.61" y1="63.1" x2="112.61" y2="77.5" stroke="#b6d8f2" stroke-width="0.6" />
<line x1="105.4" y1="70.31" x2="119.8" y2="70.31" stroke="#b6d8f2" stroke-width="0.6" />
<line x1="115.08" y1="63.1" x2="115.08" y2="77.5" stroke="#b6d8f2" stroke-width="0.6" />
<line x1="105.4" y1="72.78" x2="119.8" y2="72.78" stroke="#b6d8f2" stroke-width="0.6" />
<line x1="117.55" y1="63.1" x2="117.55" y2="77.5" stroke="#b6d8f2" stroke-width="0.6" />
<line x1="105.4" y1="75.25" x2="119.8" y2="75.25" stroke="#b6d8f2" stroke-width="0.6" />
<path d="M105.8 72 l1.5 -5 l1.5 5 l1.5 -5 l1.5 5 l1.5 -5 l1.5 5 l1.4 -6.4 l1.4 6.4 l1.4 -5" fill="none" stroke="#d02038" stroke-width="1.1"/>
<circle cx="115.2" cy="64.6" r="0.9" fill="#f0a020"/>
<text x="107" y="77.6" font-size="6.6" fill="#111" textLength="4" lengthAdjust="spacingAndGlyphs" font-weight="bold">S</text>
<rect x="125.8" y="63.2" width="11.6" height="14.6" fill="#f5f5f5"/>
<path d="M128.7 65 V76.4 M134.8 65 V76.4 M128.7 70.6 H134.8" fill="none" stroke="#3cb456" stroke-width="1.7"/>
<line x1="143" y1="68" x2="148.1" y2="68" stroke="#e8141c" stroke-width="1.2" />
<path d="M153.1 62.9 L158.2 68 L153.1 73.1 L148.0 68 Z" fill="#e8202a"/>
<path d="M153.1 64.2 l1.2 1.6 h-2.4 Z M153.1 71.8 l1.2 -1.6 h-2.4 Z M149.29999999999998 68 l1.6 -1.2 v2.4 Z M156.9 68 l-1.6 -1.2 v2.4 Z" fill="#ffffff"/>
<rect x="151.9" y="66.8" width="2.4" height="2.4" fill="#e8141c" stroke="#ffffff" stroke-width="0.4"/>
<text x="146" y="77.3" font-size="5.2" fill="#2a2a2a" textLength="10.2" lengthAdjust="spacingAndGlyphs" font-weight="bold">CSV</text>
<line x1="162.2" y1="68" x2="167.4" y2="68" stroke="#e8141c" stroke-width="1.2" />
<path d="M172.4 62.9 L177.5 68 L172.4 73.1 L167.3 68 Z" fill="#e8202a"/>
<path d="M172.4 64.2 l1.2 1.6 h-2.4 Z M172.4 71.8 l1.2 -1.6 h-2.4 Z M168.6 68 l1.6 -1.2 v2.4 Z M176.20000000000002 68 l-1.6 -1.2 v2.4 Z" fill="#ffffff"/>
<rect x="171.2" y="66.8" width="2.4" height="2.4" fill="#e8141c" stroke="#ffffff" stroke-width="0.4"/>
<text x="163" y="72.8" font-size="4.2" fill="#222" textLength="6.6" lengthAdjust="spacingAndGlyphs" font-weight="bold" stroke="#222" stroke-width="0.22">Pin</text>
<text x="163.4" y="77.3" font-size="4.4" fill="#222" textLength="8.6" lengthAdjust="spacingAndGlyphs" font-weight="bold" stroke="#222" stroke-width="0.22">Wire</text>
<rect x="182.3" y="63.9" width="13.6" height="13.5" fill="#dfeaf8" stroke="#4a80c8" stroke-width="1.3"/>
<rect x="184.6" y="66.1" width="9" height="9.1" fill="#ffffff" stroke="#4a80c8" stroke-width="1.1"/>
<rect x="186.6" y="68" width="5" height="5.4" fill="#a8c6ea" stroke="#4a80c8" stroke-width="0.8"/>
<line x1="182" y1="70.8" x2="186.6" y2="70.8" stroke="#4a80c8" stroke-width="1" />
<line x1="191.6" y1="70.8" x2="196.2" y2="70.8" stroke="#4a80c8" stroke-width="1" />
<circle cx="181.9" cy="70.9" r="1.1" fill="#f03a40"/>
<circle cx="196.4" cy="70.9" r="1.1" fill="#f03a40"/>
<path d="M201.20000000000002 66.6 L202.8 63.82 H206.0 L207.6 66.6 L206.0 69.38 H202.8 Z" fill="none" stroke="#7a35a8" stroke-width="1"/>
<path d="M203.60000000000002 69.8 L205.20000000000002 67.02 H208.4 L210.0 69.8 L208.4 72.58 H205.20000000000002 Z" fill="none" stroke="#7a35a8" stroke-width="1"/>
<line x1="207.6" y1="66.7" x2="209.6" y2="66.7" stroke="#7a35a8" stroke-width="0.8" />
<line x1="210" y1="69.8" x2="211.4" y2="69.8" stroke="#7a35a8" stroke-width="0.8" />
<circle cx="210.4" cy="66.8" r="1" fill="#e8141c"/>
<circle cx="212.2" cy="69.9" r="1" fill="#e8141c"/>
<text x="202.4" y="76.9" font-size="4.6" fill="#2a2a2a" textLength="12" lengthAdjust="spacingAndGlyphs" font-weight="bold">AUTO</text>
<path d="M220.8 63.4 Q227 66 233.2 63.4 Q229.6 67.3 233.2 71.2 Q227 68.6 220.8 71.2 Q224.4 67.3 220.8 63.4 Z" fill="#1f3cff" stroke="#1f3cff" stroke-width="0.8" stroke-linejoin="round"/>
<path d="M225.2 67.3 L229 65.6 V69 Z" fill="#ffffff"/>
<text x="222.4" y="74.6" font-size="3.4" fill="#222" textLength="9.6" lengthAdjust="spacingAndGlyphs" font-weight="bold" stroke="#222" stroke-width="0.22">SERDES</text>
<text x="224" y="78" font-size="3.8" fill="#111" textLength="7" lengthAdjust="spacingAndGlyphs" font-weight="bold" stroke="#111" stroke-width="0.22">BPS</text>
<rect x="238.9" y="63.4" width="14" height="10" fill="#ffffff" stroke="#707070" stroke-width="0.9"/>
<rect x="239.5" y="64.2" width="12.8" height="1.9" fill="#7fe0c8"/>
<rect x="239.5" y="70.7" width="12.8" height="1.9" fill="#7fe0c8"/>
<rect x="241.1" y="64.2" width="1.8" height="1.2" fill="#4fd23c"/>
<rect x="240.3" y="71.4" width="1.8" height="1.2" fill="#4fd23c"/>
<rect x="245.9" y="64.2" width="1.8" height="1.2" fill="#4fd23c"/>
<rect x="245.1" y="71.4" width="1.8" height="1.2" fill="#4fd23c"/>
<rect x="250.3" y="64.2" width="1.8" height="1.2" fill="#4fd23c"/>
<rect x="249.5" y="71.4" width="1.8" height="1.2" fill="#4fd23c"/>
<path d="M241.20000000000002 65.0 H244.20000000000002 L243.20000000000002 68.4 L244.20000000000002 71.8 H241.20000000000002 L242.20000000000002 68.4 Z" fill="#1c4cff"/>
<path d="M247.6 65.0 H250.6 L249.6 68.4 L250.6 71.8 H247.6 L248.6 68.4 Z" fill="#1c4cff"/>
<text x="239.1" y="77.7" font-size="4.6" fill="#000" textLength="13.6" lengthAdjust="spacingAndGlyphs">PCIe AMI</text>
<rect x="258.3" y="63.4" width="14" height="10" fill="#ffffff" stroke="#707070" stroke-width="0.9"/>
<rect x="258.90000000000003" y="64.2" width="12.8" height="1.9" fill="#7fe0c8"/>
<rect x="258.90000000000003" y="70.7" width="12.8" height="1.9" fill="#7fe0c8"/>
<rect x="260.5" y="64.2" width="1.8" height="1.2" fill="#4fd23c"/>
<rect x="259.7" y="71.4" width="1.8" height="1.2" fill="#4fd23c"/>
<rect x="265.3" y="64.2" width="1.8" height="1.2" fill="#4fd23c"/>
<rect x="264.5" y="71.4" width="1.8" height="1.2" fill="#4fd23c"/>
<rect x="269.7" y="64.2" width="1.8" height="1.2" fill="#4fd23c"/>
<rect x="268.9" y="71.4" width="1.8" height="1.2" fill="#4fd23c"/>
<path d="M260.6 65.0 H263.6 L262.6 68.4 L263.6 71.8 H260.6 L261.6 68.4 Z" fill="#1c4cff"/>
<path d="M267.0 65.0 H270.0 L269.0 68.4 L270.0 71.8 H267.0 L268.0 68.4 Z" fill="#1c4cff"/>
<text x="258.5" y="77.7" font-size="4.6" fill="#000" textLength="13.6" lengthAdjust="spacingAndGlyphs" font-weight="bold">USB AMI</text>
<rect x="277.4" y="63.4" width="14" height="10" fill="#ffffff" stroke="#707070" stroke-width="0.9"/>
<rect x="278.0" y="64.2" width="12.8" height="1.9" fill="#7fe0c8"/>
<rect x="278.0" y="70.7" width="12.8" height="1.9" fill="#7fe0c8"/>
<rect x="279.6" y="64.2" width="1.8" height="1.2" fill="#4fd23c"/>
<rect x="278.8" y="71.4" width="1.8" height="1.2" fill="#4fd23c"/>
<rect x="284.4" y="64.2" width="1.8" height="1.2" fill="#4fd23c"/>
<rect x="283.6" y="71.4" width="1.8" height="1.2" fill="#4fd23c"/>
<rect x="288.8" y="64.2" width="1.8" height="1.2" fill="#4fd23c"/>
<rect x="288.0" y="71.4" width="1.8" height="1.2" fill="#4fd23c"/>
<path d="M279.7 65.0 H282.7 L281.7 68.4 L282.7 71.8 H279.7 L280.7 68.4 Z" fill="#1c4cff"/>
<path d="M286.09999999999997 65.0 H289.09999999999997 L288.09999999999997 68.4 L289.09999999999997 71.8 H286.09999999999997 L287.09999999999997 68.4 Z" fill="#1c4cff"/>
<text x="277.7" y="77.7" font-size="4.6" fill="#000" textLength="13.4" lengthAdjust="spacingAndGlyphs" font-weight="bold">802.3 AMI</text>
<circle cx="303.4" cy="70.3" r="7.5" fill="url(#gHelp)"/>
<text x="300.3" y="75" font-size="12.6" fill="#ffffff" font-weight="bold">?</text>
<line x1="314.2" y1="62" x2="314.2" y2="79" stroke="#cfcfcf" stroke-width="1" />
<rect x="317.0" y="63.2" width="1.2" height="0.9" fill="#bdbdbd"/>
<rect x="317.0" y="65.7" width="1.2" height="0.9" fill="#bdbdbd"/>
<rect x="317.0" y="68.2" width="1.2" height="0.9" fill="#bdbdbd"/>
<rect x="317.0" y="70.7" width="1.2" height="0.9" fill="#bdbdbd"/>
<rect x="317.0" y="73.2" width="1.2" height="0.9" fill="#bdbdbd"/>
<rect x="317.0" y="75.7" width="1.2" height="0.9" fill="#bdbdbd"/>
<path d="M328.6 63 H333.4 V68 H337 L331.4 73.6 L325.6 68 H328.6 Z" fill="#3b8f3b"/>
<line x1="329" y1="64.4" x2="333" y2="64.4" stroke="#7cc07c" stroke-width="0.6" />
<line x1="329" y1="66" x2="333" y2="66" stroke="#7cc07c" stroke-width="0.6" />
<path d="M337.6 63.6 L339 65 L331.4 72.6 L329.6 73 L330 71.2 Z" fill="#ffffff" stroke="#1a1a1a" stroke-width="0.8"/>
<path d="M336.6 64.6 L338 66 L339 65 L337.6 63.6 Z" fill="#444"/>
<path d="M324 74.2 H329.4 L331.2 76 L333 74.2 H338.4 V77.6 H324 Z" fill="#f8b81a" stroke="#a888d4" stroke-width="0.7"/>
<path d="M350.2 63 L355.6 68.2 H353 V73 H347.4 V68.2 H344.8 Z" fill="#a9a9a9"/>
<line x1="347.8" y1="70" x2="352.6" y2="70" stroke="#d0d0d0" stroke-width="0.6" />
<line x1="347.8" y1="71.6" x2="352.6" y2="71.6" stroke="#d0d0d0" stroke-width="0.6" />
<path d="M343 74.2 H348.4 L350.2 76 L352 74.2 H357.4 V77.6 H343 Z" fill="#dcdcdc" stroke="#a8a8a8" stroke-width="0.7"/>
<path d="M366.4 63 H371 V68.4 H374 L368.8 73.6 L363.4 68.4 H366.4 Z" fill="#1a7ccc"/>
<line x1="366.8" y1="64.4" x2="370.6" y2="64.4" stroke="#8cc4f0" stroke-width="0.6" />
<line x1="366.8" y1="66" x2="370.6" y2="66" stroke="#8cc4f0" stroke-width="0.6" />
<path d="M371.8 66.8 V65.2 Q371.8 63.2 373.6 63.2 Q375.4 63.2 375.4 65.2 V66.8" fill="none" stroke="#b8b8b8" stroke-width="1"/>
<rect x="370.6" y="66.6" width="6" height="4.6" fill="#b47a3a" stroke="#7a4e1e" stroke-width="0.5" rx="0.6"/>
<path d="M362 74.2 H367.4 L369.2 76 L371 74.2 H376.4 V77.6 H362 Z" fill="#f8b81a" stroke="#a888d4" stroke-width="0.7"/>
<rect x="381.2" y="63.6" width="14" height="13.8" fill="#ffffff" stroke="#ea1030" stroke-width="1.5"/>
<path d="M381.2 63.6 L395.2 77.4 M395.2 63.6 L381.2 77.4" fill="none" stroke="#ea1030" stroke-width="1.2"/>
<line x1="381.2" y1="70.5" x2="395.2" y2="70.5" stroke="#ea1030" stroke-width="1.2" />
<ellipse cx="388.2" cy="67.2" rx="1.5" ry="2.6" fill="#2faa3c"/>
<ellipse cx="388.2" cy="67.2" rx="0.7" ry="1.7" fill="#f0e020"/>
<ellipse cx="388.2" cy="73.8" rx="1.5" ry="2.6" fill="#2faa3c"/>
<ellipse cx="388.2" cy="73.8" rx="0.7" ry="1.7" fill="#f0e020"/>
<rect x="400.3" y="63.6" width="14" height="13.8" fill="#ffffff" stroke="#ea1030" stroke-width="1.5"/>
<path d="M400.3 63.6 L414.3 77.4 M414.3 63.6 L400.3 77.4" fill="none" stroke="#ea1030" stroke-width="1.2"/>
<ellipse cx="407.3" cy="67.2" rx="1.5" ry="2.6" fill="#2faa3c"/>
<ellipse cx="407.3" cy="67.2" rx="0.7" ry="1.7" fill="#f0e020"/>
<ellipse cx="407.3" cy="73.8" rx="1.5" ry="2.6" fill="#2faa3c"/>
<ellipse cx="407.3" cy="73.8" rx="0.7" ry="1.7" fill="#f0e020"/>
<rect x="2.6" y="162.3" width="25.8" height="23.1" fill="#e3e3e3" stroke="#d2d2d2" stroke-width="0.8"/>
<rect x="31.1" y="162.3" width="25.8" height="23.1" fill="#e3e3e3" stroke="#d2d2d2" stroke-width="0.8"/>
<rect x="2.6" y="188.2" width="25.8" height="23.1" fill="#e3e3e3" stroke="#d2d2d2" stroke-width="0.8"/>
<rect x="31.1" y="188.2" width="25.8" height="23.1" fill="#e3e3e3" stroke="#d2d2d2" stroke-width="0.8"/>
<rect x="2.6" y="214.2" width="25.8" height="23.1" fill="#e3e3e3" stroke="#d2d2d2" stroke-width="0.8"/>
<rect x="31.1" y="214.2" width="25.8" height="23.1" fill="#e3e3e3" stroke="#d2d2d2" stroke-width="0.8"/>
<rect x="2.6" y="240.1" width="25.8" height="23.1" fill="#e3e3e3" stroke="#d2d2d2" stroke-width="0.8"/>
<rect x="31.1" y="240.1" width="25.8" height="23.1" fill="#e3e3e3" stroke="#d2d2d2" stroke-width="0.8"/>
<rect x="2.6" y="266.0" width="25.8" height="23.1" fill="#e3e3e3" stroke="#d2d2d2" stroke-width="0.8"/>
<rect x="31.1" y="266.0" width="25.8" height="23.1" fill="#e3e3e3" stroke="#d2d2d2" stroke-width="0.8"/>
<rect x="2.6" y="292.0" width="25.8" height="23.1" fill="#e3e3e3" stroke="#d2d2d2" stroke-width="0.8"/>
<rect x="31.1" y="292.0" width="25.8" height="23.1" fill="#e3e3e3" stroke="#d2d2d2" stroke-width="0.8"/>
<rect x="2.6" y="317.9" width="25.8" height="23.1" fill="#e3e3e3" stroke="#d2d2d2" stroke-width="0.8"/>
<rect x="31.1" y="317.9" width="25.8" height="23.1" fill="#e3e3e3" stroke="#d2d2d2" stroke-width="0.8"/>
<rect x="2.6" y="343.8" width="25.8" height="23.1" fill="#e3e3e3" stroke="#d2d2d2" stroke-width="0.8"/>
<rect x="31.1" y="343.8" width="25.8" height="23.1" fill="#e3e3e3" stroke="#d2d2d2" stroke-width="0.8"/>
<rect x="7.0" y="165.10000000000002" width="16.6" height="11.3" fill="#ffffff" stroke="#111" stroke-width="0.9"/>
<rect x="7.800000000000001" y="168.9" width="12.6" height="6.4" fill="#4f9a32"/>
<rect x="8.2" y="166.0" width="3" height="2.5" fill="#1414f0"/>
<rect x="12.2" y="166.0" width="3" height="2.5" fill="#1414f0"/>
<rect x="16.2" y="166.0" width="3" height="2.5" fill="#1414f0"/>
<text x="8.6" y="172.5" font-size="3" fill="#e8a020" textLength="6.4" lengthAdjust="spacingAndGlyphs" font-weight="bold" stroke="#e8a020" stroke-width="0.22">CHIP</text>
<path d="M22.6 165.9 L23.8 167.10000000000002 L21.200000000000003 170.70000000000002 Q22.0 172.9 20.400000000000002 174.3 Q19.0 175.3 17.400000000000002 174.70000000000002 L19.400000000000002 172.9 L18.400000000000002 171.3 L16.0 172.10000000000002 Q16.2 169.9 18.0 169.3 Q19.200000000000003 168.9 20.0 169.3 Z" fill="#ffffff" stroke="#111" stroke-width="0.8"/>
<text x="7.0" y="180.5" font-size="5.4" fill="#111" textLength="15" lengthAdjust="spacingAndGlyphs" font-weight="bold" stroke="#111" stroke-width="0.2">CHIPLET</text>
<text x="12.2" y="184.5" font-size="5.4" fill="#111" textLength="12" lengthAdjust="spacingAndGlyphs" font-weight="bold" stroke="#111" stroke-width="0.2">SETUP</text>
<rect x="36.5" y="165.10000000000002" width="16" height="11.6" fill="#ececec"/>
<line x1="52.5" y1="165.10000000000002" x2="52.5" y2="176.70000000000002" stroke="#6a6a6a" stroke-width="0.9" />
<line x1="36.5" y1="176.70000000000002" x2="52.5" y2="176.70000000000002" stroke="#6a6a6a" stroke-width="0.9" />
<line x1="36.5" y1="165.10000000000002" x2="52.5" y2="165.10000000000002" stroke="#ffffff" stroke-width="0.8" />
<line x1="36.5" y1="165.10000000000002" x2="36.5" y2="176.70000000000002" stroke="#ffffff" stroke-width="0.8" />
<g transform="translate(44.5 170.6) scale(0.86 0.78)">
<rect x="-1.5" y="-5.4" width="3" height="3.4" fill="#f2ee30" stroke="#101010" stroke-width="1" transform="rotate(30)"/>
<rect x="-1.5" y="-5.4" width="3" height="3.4" fill="#f2ee30" stroke="#101010" stroke-width="1" transform="rotate(90)"/>
<rect x="-1.5" y="-5.4" width="3" height="3.4" fill="#f2ee30" stroke="#101010" stroke-width="1" transform="rotate(150)"/>
<rect x="-1.5" y="-5.4" width="3" height="3.4" fill="#f2ee30" stroke="#101010" stroke-width="1" transform="rotate(210)"/>
<rect x="-1.5" y="-5.4" width="3" height="3.4" fill="#f2ee30" stroke="#101010" stroke-width="1" transform="rotate(270)"/>
<rect x="-1.5" y="-5.4" width="3" height="3.4" fill="#f2ee30" stroke="#101010" stroke-width="1" transform="rotate(330)"/>
<circle cx="0" cy="0" r="3.5" fill="#f2ee30" stroke="#101010" stroke-width="1"/>
<rect x="-1.15" y="-4.9" width="2.3" height="3" fill="#f2ee30" transform="rotate(30)"/>
<rect x="-1.15" y="-4.9" width="2.3" height="3" fill="#f2ee30" transform="rotate(90)"/>
<rect x="-1.15" y="-4.9" width="2.3" height="3" fill="#f2ee30" transform="rotate(150)"/>
<rect x="-1.15" y="-4.9" width="2.3" height="3" fill="#f2ee30" transform="rotate(210)"/>
<rect x="-1.15" y="-4.9" width="2.3" height="3" fill="#f2ee30" transform="rotate(270)"/>
<rect x="-1.15" y="-4.9" width="2.3" height="3" fill="#f2ee30" transform="rotate(330)"/>
<rect x="-0.9" y="-4.4" width="1.8" height="5" fill="#ffffff" stroke="#101010" stroke-width="0.8"/>
<circle cx="0" cy="1.2" r="1.1" fill="#101010"/>
</g>
<text x="33.9" y="180.6" font-size="4.8" fill="#111" textLength="20" lengthAdjust="spacingAndGlyphs" font-weight="bold" stroke="#111" stroke-width="0.2">ChipletSim</text>
<text x="38.3" y="184.4" font-size="4.8" fill="#111" textLength="8.4" lengthAdjust="spacingAndGlyphs" font-weight="bold" stroke="#111" stroke-width="0.2">PHY</text>
<rect x="5.0" y="190.0" width="1.6" height="1.4" fill="#f4ee50"/>
<rect x="7.199999999999999" y="192.0" width="6.4" height="9.2" fill="#f08a18" stroke="#2f9a8a" stroke-width="0.9"/>
<text x="8.8" y="196.2" font-size="2.6" fill="#3a2a00" textLength="2" lengthAdjust="spacingAndGlyphs" stroke="#3a2a00" stroke-width="0.22">R</text>
<text x="8.8" y="199.6" font-size="2.6" fill="#3a2a00" textLength="2" lengthAdjust="spacingAndGlyphs" stroke="#3a2a00" stroke-width="0.22">T</text>
<rect x="17.0" y="192.0" width="4.2" height="9.2" fill="#8a1a9a" stroke="#5a0a6a" stroke-width="0.5"/>
<line x1="14.0" y1="194.5" x2="23.400000000000002" y2="194.5" stroke="#1a1aff" stroke-width="0.9" />
<path d="M25.0 194.5 l-2.2 -1.5 v3 z" fill="#1a1aff"/>
<line x1="15.6" y1="199.1" x2="25.0" y2="199.1" stroke="#ff6a6a" stroke-width="0.9" />
<path d="M14.0 199.1 l2.2 -1.5 v3 z" fill="#ff1a1a"/>
<text x="6.8" y="206.4" font-size="5.4" fill="#111" textLength="15.4" lengthAdjust="spacingAndGlyphs" font-weight="bold" stroke="#111" stroke-width="0.2">CHIPLET</text>
<text x="12.0" y="210.4" font-size="5.4" fill="#111" textLength="7" lengthAdjust="spacingAndGlyphs" font-weight="bold" stroke="#111" stroke-width="0.2">DIE</text>
<rect x="33.5" y="190.0" width="1.6" height="1.4" fill="#f4ee50"/>
<rect x="36.1" y="190.6" width="5" height="3" fill="#7a1414"/>
<rect x="46.1" y="190.6" width="5.4" height="3" fill="#7a1414"/>
<rect x="36.7" y="193.39999999999998" width="3.8" height="1.5" fill="#2a3aff"/>
<rect x="46.7" y="193.39999999999998" width="4" height="1.5" fill="#2a3aff"/>
<rect x="35.1" y="194.6" width="18" height="7.6" fill="#2f9a1a" stroke="#111" stroke-width="0.8"/>
<path d="M37.5 195.2 V199.79999999999998 H50.7 V195.2" fill="none" stroke="#f4f020" stroke-width="1.3"/>
<path d="M40.3 195.2 V197.39999999999998 H47.900000000000006 V195.2" fill="none" stroke="#f4f020" stroke-width="0.9"/>
<text x="35.1" y="206.4" font-size="5.4" fill="#111" textLength="10" lengthAdjust="spacingAndGlyphs" font-weight="bold" stroke="#111" stroke-width="0.2">POST</text>
<text x="37.5" y="210.4" font-size="5.4" fill="#111" textLength="15.6" lengthAdjust="spacingAndGlyphs" font-weight="bold" stroke="#111" stroke-width="0.2">LAYOUT</text>
<rect x="5.0" y="216.0" width="1.6" height="1.4" fill="#f4ee50"/>
<path d="M7.0 218.79999999999998 H12.2 L14.6 223.0 H23.400000000000002 M13.2 223.0 L15.2 226.39999999999998 L18.0 229.0 H23.400000000000002" fill="none" stroke="#111" stroke-width="1.1"/>
<circle cx="13.6" cy="219.0" r="1.6" fill="#ffffff" stroke="#111" stroke-width="0.7"/>
<circle cx="13.2" cy="224.2" r="1.4" fill="#ffffff" stroke="#111" stroke-width="0.6"/>
<rect x="6.4" y="217.79999999999998" width="1.8" height="2" fill="#111"/>
<rect x="22.6" y="222.0" width="1.8" height="2" fill="#111"/>
<rect x="22.6" y="228.0" width="1.8" height="2" fill="#111"/>
<text x="6.8" y="235.0" font-size="4.6" fill="#111" textLength="16.4" lengthAdjust="spacingAndGlyphs" font-weight="bold" stroke="#111" stroke-width="0.2">PreLayout</text>
<rect x="33.5" y="216.0" width="1.6" height="1.4" fill="#f4ee50"/>
<text x="35.300000000000004" y="225.79999999999998" font-size="7.4" fill="#111" textLength="5.4" lengthAdjust="spacingAndGlyphs" font-weight="bold">N</text>
<rect x="44.7" y="216.5" width="4" height="3.2" fill="#f4ee20" stroke="#111" stroke-width="0.7" rx="0.8"/>
<rect x="42.400000000000006" y="217.5" width="1.2" height="1.2" fill="#ff2a2a"/>
<rect x="49.900000000000006" y="217.5" width="1.2" height="1.2" fill="#ff2a2a"/>
<rect x="44.7" y="220.6" width="4" height="3.2" fill="#f4ee20" stroke="#111" stroke-width="0.7" rx="0.8"/>
<rect x="42.400000000000006" y="221.6" width="1.2" height="1.2" fill="#ff2a2a"/>
<rect x="49.900000000000006" y="221.6" width="1.2" height="1.2" fill="#ff2a2a"/>
<rect x="44.7" y="224.89999999999998" width="4" height="3.2" fill="#f4ee20" stroke="#111" stroke-width="0.7" rx="0.8"/>
<rect x="42.400000000000006" y="225.89999999999998" width="1.2" height="1.2" fill="#ff2a2a"/>
<rect x="49.900000000000006" y="225.89999999999998" width="1.2" height="1.2" fill="#ff2a2a"/>
<text x="34.3" y="232.6" font-size="5.2" fill="#111" textLength="16.6" lengthAdjust="spacingAndGlyphs" font-weight="bold" stroke="#111" stroke-width="0.2">CHIPLET</text>
<text x="40.1" y="236.4" font-size="5.2" fill="#111" textLength="11" lengthAdjust="spacingAndGlyphs" font-weight="bold" stroke="#111" stroke-width="0.2">TLINE</text>
<rect x="6.4" y="242.9" width="1.9" height="2.4" fill="#2a2aff"/>
<rect x="8.8" y="242.9" width="1.9" height="2.4" fill="#2a2aff"/>
<rect x="6.4" y="245.9" width="1.9" height="2.4" fill="#2a2aff"/>
<rect x="8.8" y="245.9" width="1.9" height="2.4" fill="#2a2aff"/>
<rect x="6.4" y="248.9" width="1.9" height="2.4" fill="#2a2aff"/>
<rect x="8.8" y="248.9" width="1.9" height="2.4" fill="#2a2aff"/>
<rect x="13.2" y="243.0" width="11.8" height="8.4" fill="#18d8d8" stroke="#111" stroke-width="0.8"/>
<path d="M14.0 244.5 L19.1 249.9 L24.200000000000003 244.5 M14.0 249.9 L19.1 244.5 L24.200000000000003 249.9 M14.0 244.5 H24.200000000000003 M14.0 249.9 H24.200000000000003" fill="none" stroke="#0a0a0a" stroke-width="0.8"/>
<circle cx="14.6" cy="253.5" r="1.1" fill="#ffffff" stroke="#2a2aff" stroke-width="0.7"/>
<circle cx="17.5" cy="253.5" r="1.1" fill="#ffffff" stroke="#2a2aff" stroke-width="0.7"/>
<circle cx="20.4" cy="253.5" r="1.1" fill="#ffffff" stroke="#2a2aff" stroke-width="0.7"/>
<circle cx="23.3" cy="253.5" r="1.1" fill="#ffffff" stroke="#2a2aff" stroke-width="0.7"/>
<text x="7.800000000000001" y="261.1" font-size="6.4" fill="#111" textLength="14.2" lengthAdjust="spacingAndGlyphs" stroke="#111" stroke-width="0.2">PROBE</text>
<rect x="36.1" y="242.5" width="16" height="11.6" fill="#ececec"/>
<line x1="52.1" y1="242.5" x2="52.1" y2="254.1" stroke="#6a6a6a" stroke-width="0.9" />
<line x1="36.1" y1="254.1" x2="52.1" y2="254.1" stroke="#6a6a6a" stroke-width="0.9" />
<line x1="36.1" y1="242.5" x2="52.1" y2="242.5" stroke="#ffffff" stroke-width="0.8" />
<line x1="36.1" y1="242.5" x2="36.1" y2="254.1" stroke="#ffffff" stroke-width="0.8" />
<g transform="translate(44.1 248.0) scale(0.86 0.78)">
<rect x="-1.5" y="-5.4" width="3" height="3.4" fill="#f2ee30" stroke="#101010" stroke-width="1" transform="rotate(30)"/>
<rect x="-1.5" y="-5.4" width="3" height="3.4" fill="#f2ee30" stroke="#101010" stroke-width="1" transform="rotate(90)"/>
<rect x="-1.5" y="-5.4" width="3" height="3.4" fill="#f2ee30" stroke="#101010" stroke-width="1" transform="rotate(150)"/>
<rect x="-1.5" y="-5.4" width="3" height="3.4" fill="#f2ee30" stroke="#101010" stroke-width="1" transform="rotate(210)"/>
<rect x="-1.5" y="-5.4" width="3" height="3.4" fill="#f2ee30" stroke="#101010" stroke-width="1" transform="rotate(270)"/>
<rect x="-1.5" y="-5.4" width="3" height="3.4" fill="#f2ee30" stroke="#101010" stroke-width="1" transform="rotate(330)"/>
<circle cx="0" cy="0" r="3.5" fill="#f2ee30" stroke="#101010" stroke-width="1"/>
<rect x="-1.15" y="-4.9" width="2.3" height="3" fill="#f2ee30" transform="rotate(30)"/>
<rect x="-1.15" y="-4.9" width="2.3" height="3" fill="#f2ee30" transform="rotate(90)"/>
<rect x="-1.15" y="-4.9" width="2.3" height="3" fill="#f2ee30" transform="rotate(150)"/>
<rect x="-1.15" y="-4.9" width="2.3" height="3" fill="#f2ee30" transform="rotate(210)"/>
<rect x="-1.15" y="-4.9" width="2.3" height="3" fill="#f2ee30" transform="rotate(270)"/>
<rect x="-1.15" y="-4.9" width="2.3" height="3" fill="#f2ee30" transform="rotate(330)"/>
<rect x="-0.9" y="-4.4" width="1.8" height="5" fill="#ffffff" stroke="#101010" stroke-width="0.8"/>
<circle cx="0" cy="1.2" r="1.1" fill="#101010"/>
</g>
<text x="38.1" y="260.3" font-size="5.8" fill="#111" textLength="11" lengthAdjust="spacingAndGlyphs" stroke="#111" stroke-width="0.2">Trans</text>
<rect x="7.6" y="268.0" width="16" height="11.6" fill="#ececec"/>
<line x1="23.6" y1="268.0" x2="23.6" y2="279.6" stroke="#6a6a6a" stroke-width="0.9" />
<line x1="7.6" y1="279.6" x2="23.6" y2="279.6" stroke="#6a6a6a" stroke-width="0.9" />
<line x1="7.6" y1="268.0" x2="23.6" y2="268.0" stroke="#ffffff" stroke-width="0.8" />
<line x1="7.6" y1="268.0" x2="7.6" y2="279.6" stroke="#ffffff" stroke-width="0.8" />
<g transform="translate(15.6 273.5) scale(0.86 0.78)">
<rect x="-1.5" y="-5.4" width="3" height="3.4" fill="#f2ee30" stroke="#101010" stroke-width="1" transform="rotate(30)"/>
<rect x="-1.5" y="-5.4" width="3" height="3.4" fill="#f2ee30" stroke="#101010" stroke-width="1" transform="rotate(90)"/>
<rect x="-1.5" y="-5.4" width="3" height="3.4" fill="#f2ee30" stroke="#101010" stroke-width="1" transform="rotate(150)"/>
<rect x="-1.5" y="-5.4" width="3" height="3.4" fill="#f2ee30" stroke="#101010" stroke-width="1" transform="rotate(210)"/>
<rect x="-1.5" y="-5.4" width="3" height="3.4" fill="#f2ee30" stroke="#101010" stroke-width="1" transform="rotate(270)"/>
<rect x="-1.5" y="-5.4" width="3" height="3.4" fill="#f2ee30" stroke="#101010" stroke-width="1" transform="rotate(330)"/>
<circle cx="0" cy="0" r="3.5" fill="#f2ee30" stroke="#101010" stroke-width="1"/>
<rect x="-1.15" y="-4.9" width="2.3" height="3" fill="#f2ee30" transform="rotate(30)"/>
<rect x="-1.15" y="-4.9" width="2.3" height="3" fill="#f2ee30" transform="rotate(90)"/>
<rect x="-1.15" y="-4.9" width="2.3" height="3" fill="#f2ee30" transform="rotate(150)"/>
<rect x="-1.15" y="-4.9" width="2.3" height="3" fill="#f2ee30" transform="rotate(210)"/>
<rect x="-1.15" y="-4.9" width="2.3" height="3" fill="#f2ee30" transform="rotate(270)"/>
<rect x="-1.15" y="-4.9" width="2.3" height="3" fill="#f2ee30" transform="rotate(330)"/>
<rect x="-0.9" y="-4.4" width="1.8" height="5" fill="#ffffff" stroke="#101010" stroke-width="0.8"/>
<circle cx="0" cy="1.2" r="1.1" fill="#101010"/>
</g>
<text x="11.2" y="286.0" font-size="6.2" fill="#111" textLength="9" lengthAdjust="spacingAndGlyphs" stroke="#111" stroke-width="0.2">A C</text>
<rect x="36.5" y="269.0" width="14.6" height="10.2" fill="#c4c4c4" stroke="#8a8aa0" stroke-width="0.7"/>
<rect x="36.5" y="269.0" width="14.6" height="1.7" fill="#00008a"/>
<rect x="38.1" y="272.6" width="5.2" height="4.4" fill="#e8e8e8" stroke="#8a8a8a" stroke-width="0.4"/>
<rect x="44.1" y="272.6" width="5.4" height="3" fill="#ffffff" stroke="#8a8a8a" stroke-width="0.4"/>
<line x1="51.5" y1="269.6" x2="51.5" y2="279.6" stroke="#6a6a6a" stroke-width="0.8" />
<line x1="36.9" y1="279.6" x2="51.5" y2="279.6" stroke="#6a6a6a" stroke-width="0.8" />
<text x="35.3" y="286.0" font-size="6.2" fill="#111" textLength="17" lengthAdjust="spacingAndGlyphs" stroke="#111" stroke-width="0.2">Options</text>
<rect x="5.0" y="293.8" width="1.6" height="1.4" fill="#f4ee50"/>
<rect x="6.2" y="296.2" width="18.2" height="12.8" fill="#f0f0f0" stroke="#222" stroke-width="0.9"/>
<text x="7.2" y="301.8" font-size="6" fill="#222" textLength="16" lengthAdjust="spacingAndGlyphs" stroke="#111" stroke-width="0.2">Sweep</text>
<text x="10.2" y="307.4" font-size="6" fill="#222" textLength="11" lengthAdjust="spacingAndGlyphs" stroke="#111" stroke-width="0.2">Plan</text>
<rect x="36.1" y="294.4" width="16" height="11.6" fill="#ececec"/>
<line x1="52.1" y1="294.4" x2="52.1" y2="306.0" stroke="#6a6a6a" stroke-width="0.9" />
<line x1="36.1" y1="306.0" x2="52.1" y2="306.0" stroke="#6a6a6a" stroke-width="0.9" />
<line x1="36.1" y1="294.4" x2="52.1" y2="294.4" stroke="#ffffff" stroke-width="0.8" />
<line x1="36.1" y1="294.4" x2="36.1" y2="306.0" stroke="#ffffff" stroke-width="0.8" />
<g transform="translate(42.7 299.9) scale(0.86 0.78)">
<rect x="-1.5" y="-5.4" width="3" height="3.4" fill="#f2ee30" stroke="#101010" stroke-width="1" transform="rotate(30)"/>
<rect x="-1.5" y="-5.4" width="3" height="3.4" fill="#f2ee30" stroke="#101010" stroke-width="1" transform="rotate(90)"/>
<rect x="-1.5" y="-5.4" width="3" height="3.4" fill="#f2ee30" stroke="#101010" stroke-width="1" transform="rotate(150)"/>
<rect x="-1.5" y="-5.4" width="3" height="3.4" fill="#f2ee30" stroke="#101010" stroke-width="1" transform="rotate(210)"/>
<rect x="-1.5" y="-5.4" width="3" height="3.4" fill="#f2ee30" stroke="#101010" stroke-width="1" transform="rotate(270)"/>
<rect x="-1.5" y="-5.4" width="3" height="3.4" fill="#f2ee30" stroke="#101010" stroke-width="1" transform="rotate(330)"/>
<circle cx="0" cy="0" r="3.5" fill="#f2ee30" stroke="#101010" stroke-width="1"/>
<rect x="-1.15" y="-4.9" width="2.3" height="3" fill="#f2ee30" transform="rotate(30)"/>
<rect x="-1.15" y="-4.9" width="2.3" height="3" fill="#f2ee30" transform="rotate(90)"/>
<rect x="-1.15" y="-4.9" width="2.3" height="3" fill="#f2ee30" transform="rotate(150)"/>
<rect x="-1.15" y="-4.9" width="2.3" height="3" fill="#f2ee30" transform="rotate(210)"/>
<rect x="-1.15" y="-4.9" width="2.3" height="3" fill="#f2ee30" transform="rotate(270)"/>
<rect x="-1.15" y="-4.9" width="2.3" height="3" fill="#f2ee30" transform="rotate(330)"/>
<rect x="-0.9" y="-4.4" width="1.8" height="5" fill="#ffffff" stroke="#101010" stroke-width="0.8"/>
<circle cx="0" cy="1.2" r="1.1" fill="#101010"/>
</g>
<path d="M50.9 295.79999999999995 l-3.2 5.2 l-2 0.2 l-0.8 1.8 l1.8 1.4 l1.8 -1.2 l0 -1.8 l3.4 -4.6 z" fill="#ffffff" stroke="#111" stroke-width="0.6"/>
<text x="34.3" y="312.4" font-size="6" fill="#111" textLength="19" lengthAdjust="spacingAndGlyphs" stroke="#111" stroke-width="0.2">Prm Swp</text>
<rect x="7.6" y="320.09999999999997" width="16" height="11.6" fill="#ececec"/>
<line x1="23.6" y1="320.09999999999997" x2="23.6" y2="331.7" stroke="#6a6a6a" stroke-width="0.9" />
<line x1="7.6" y1="331.7" x2="23.6" y2="331.7" stroke="#6a6a6a" stroke-width="0.9" />
<line x1="7.6" y1="320.09999999999997" x2="23.6" y2="320.09999999999997" stroke="#ffffff" stroke-width="0.8" />
<line x1="7.6" y1="320.09999999999997" x2="7.6" y2="331.7" stroke="#ffffff" stroke-width="0.8" />
<g transform="translate(14.2 325.6) scale(0.86 0.78)">
<rect x="-1.5" y="-5.4" width="3" height="3.4" fill="#f2ee30" stroke="#101010" stroke-width="1" transform="rotate(30)"/>
<rect x="-1.5" y="-5.4" width="3" height="3.4" fill="#f2ee30" stroke="#101010" stroke-width="1" transform="rotate(90)"/>
<rect x="-1.5" y="-5.4" width="3" height="3.4" fill="#f2ee30" stroke="#101010" stroke-width="1" transform="rotate(150)"/>
<rect x="-1.5" y="-5.4" width="3" height="3.4" fill="#f2ee30" stroke="#101010" stroke-width="1" transform="rotate(210)"/>
<rect x="-1.5" y="-5.4" width="3" height="3.4" fill="#f2ee30" stroke="#101010" stroke-width="1" transform="rotate(270)"/>
<rect x="-1.5" y="-5.4" width="3" height="3.4" fill="#f2ee30" stroke="#101010" stroke-width="1" transform="rotate(330)"/>
<circle cx="0" cy="0" r="3.5" fill="#f2ee30" stroke="#101010" stroke-width="1"/>
<rect x="-1.15" y="-4.9" width="2.3" height="3" fill="#f2ee30" transform="rotate(30)"/>
<rect x="-1.15" y="-4.9" width="2.3" height="3" fill="#f2ee30" transform="rotate(90)"/>
<rect x="-1.15" y="-4.9" width="2.3" height="3" fill="#f2ee30" transform="rotate(150)"/>
<rect x="-1.15" y="-4.9" width="2.3" height="3" fill="#f2ee30" transform="rotate(210)"/>
<rect x="-1.15" y="-4.9" width="2.3" height="3" fill="#f2ee30" transform="rotate(270)"/>
<rect x="-1.15" y="-4.9" width="2.3" height="3" fill="#f2ee30" transform="rotate(330)"/>
<rect x="-0.9" y="-4.4" width="1.8" height="5" fill="#ffffff" stroke="#101010" stroke-width="0.8"/>
<circle cx="0" cy="1.2" r="1.1" fill="#101010"/>
</g>
<path d="M22.400000000000002 321.49999999999994 l-3.2 5.2 l-2 0.2 l-0.8 1.8 l1.8 1.4 l1.8 -1.2 l0 -1.8 l3.4 -4.6 z" fill="#ffffff" stroke="#111" stroke-width="0.6"/>
<path d="M8.0 331.5 H23.6 L23.6 320.9 Z" fill="#1a1a1a" opacity="0.55"/>
<text x="8.2" y="337.9" font-size="6" fill="#111" textLength="13.6" lengthAdjust="spacingAndGlyphs" stroke="#111" stroke-width="0.2">Batch</text>
<rect x="33.5" y="319.7" width="1.6" height="1.4" fill="#f4ee50"/>
<path d="M38.1 323.09999999999997 V330.3 A5.8 2.2 0 0 0 49.7 330.3 V323.09999999999997" fill="#f4f4f4" stroke="#444" stroke-width="0.6"/>
<ellipse cx="43.9" cy="323.09999999999997" rx="5.8" ry="2.2" fill="#f8f8f8" stroke="#444" stroke-width="0.6"/>
<path d="M38.1 326.9 A5.8 2.2 0 0 0 49.7 326.9" fill="none" stroke="#222" stroke-width="0.7"/>
<path d="M41.1 329.5 q2.8 -1 5.6 0" fill="none" stroke="#555" stroke-width="0.5"/>
<text x="35.3" y="337.9" font-size="6" fill="#111" textLength="17" lengthAdjust="spacingAndGlyphs" stroke="#111" stroke-width="0.2">FileList</text>
<rect x="5.0" y="345.6" width="1.6" height="1.4" fill="#f4ee50"/>
<path d="M9.6 349.2 V356.40000000000003 A5.8 2.2 0 0 0 21.2 356.40000000000003 V349.2" fill="#f4f4f4" stroke="#444" stroke-width="0.6"/>
<ellipse cx="15.399999999999999" cy="349.2" rx="5.8" ry="2.2" fill="#f8f8f8" stroke="#444" stroke-width="0.6"/>
<path d="M9.6 353.0 A5.8 2.2 0 0 0 21.2 353.0" fill="none" stroke="#222" stroke-width="0.7"/>
<path d="M12.6 355.6 q2.8 -1 5.6 0" fill="none" stroke="#555" stroke-width="0.5"/>
<text x="7.0" y="364.0" font-size="6" fill="#111" textLength="16.6" lengthAdjust="spacingAndGlyphs" stroke="#111" stroke-width="0.2">Strings</text>
<rect x="33.5" y="345.6" width="1.6" height="1.4" fill="#f4ee50"/>
<rect x="44.7" y="347.0" width="7.8" height="10" fill="#f8f8f8" stroke="#222" stroke-width="0.9"/>
<path d="M34.7 353.40000000000003 l2 -1.8 h4.6 v5.6 l-2 1.8 h-4.6 z" fill="#f0f0f0" stroke="#222" stroke-width="0.8"/>
<path d="M34.7 353.40000000000003 h4.6 v5.6 M39.3 353.40000000000003 l2 -1.8" fill="none" stroke="#222" stroke-width="0.7"/>
<path d="M41.3 350.2 H44.5" fill="none" stroke="#222" stroke-width="0.7"/>
<text x="34.7" y="364.6" font-size="5.8" fill="#000" textLength="17.4" lengthAdjust="spacingAndGlyphs" stroke="#111" stroke-width="0.2">NetList</text>
</svg>
</body></html>
